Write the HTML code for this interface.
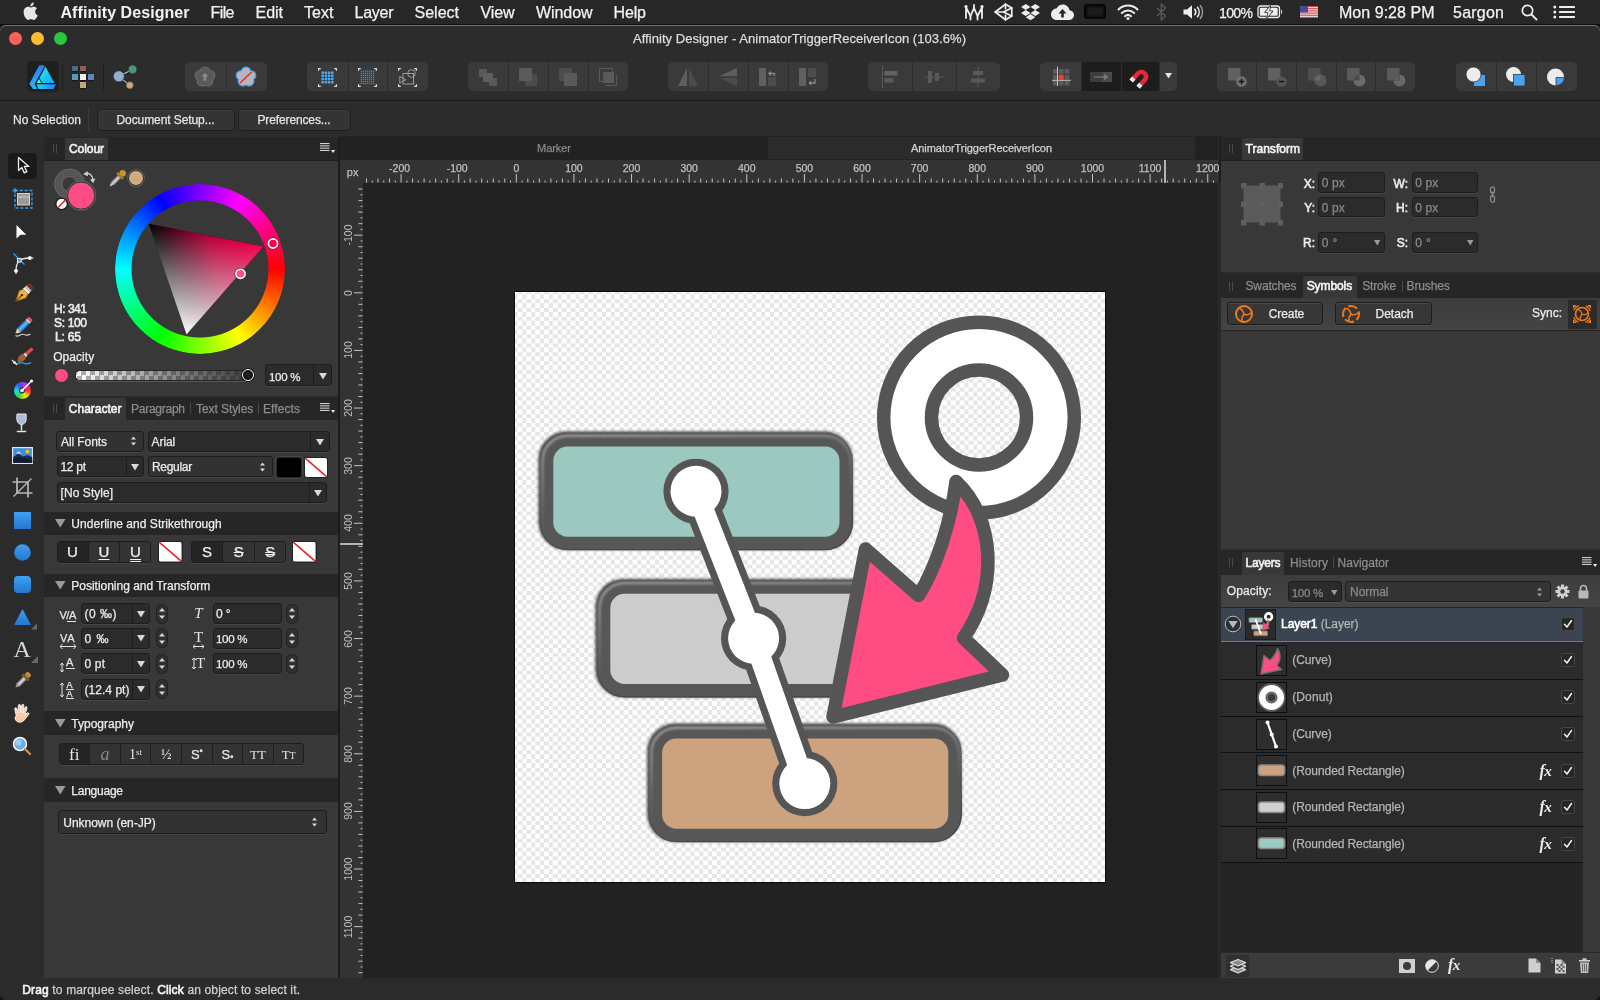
<!DOCTYPE html>
<html lang="en"><head><meta charset="utf-8"><title>Affinity Designer</title>
<style>
*{box-sizing:border-box;margin:0;padding:0}
html,body{width:1600px;height:1000px;overflow:hidden;background:#151515}
body{position:relative;font-family:"Liberation Sans", sans-serif;font-size:12px;color:#ddd;-webkit-font-smoothing:antialiased}
.b{position:absolute;display:block}
.t{position:absolute;white-space:nowrap;overflow:visible}
#root{position:absolute;left:0;top:0;width:1600px;height:1000px;will-change:transform;transform:translateZ(0)}
</style></head>
<body>
<div id="root">
<div class="b" style="left:0px;top:0px;width:1600px;height:24px;background:#272727;"></div>
<div class="b" style="left:0px;top:24px;width:1600px;height:1px;background:#0c0c0c;"></div>
<svg class="b" style="left:22px;top:2px;" width="17" height="19" viewBox="1 0 15 18"><path fill="#e6e6e6" d="M12.9 9.1c0-2 1.6-2.9 1.7-3-0.9-1.4-2.4-1.5-2.9-1.6-1.2-0.1-2.4 0.7-3 0.7-0.6 0-1.6-0.7-2.6-0.7C4.7 4.6 3.4 5.4 2.700 6.600c-1.500 2.500-0.400 6.300 1 8.400 0.700 1 1.500 2.100 2.600 2.100 1 0 1.400-0.700 2.700-0.700 1.300 0 1.600 0.700 2.700 0.600 1.100 0 1.800-1 2.500-2 0.800-1.200 1.100-2.300 1.100-2.300-0.000-0.000-2.400-0.900-2.400-3.600zM10.800 3.100c0.600-0.700 0.900-1.600 0.800-2.600-0.800 0-1.800 0.500-2.400 1.200-0.500 0.600-1 1.600-0.900 2.500 0.900 0.100 1.900-0.400 2.500-1.100z"/></svg>
<div id="m_app" class="t" style="left:60.5px;top:2.00px;height:22px;line-height:22px;font-size:16px;color:#f2f2f2;font-weight:700;letter-spacing:0.062px;">Affinity Designer</div>
<div id="m_File" class="t" style="left:210.5px;top:2.00px;height:22px;line-height:22px;font-size:16px;color:#f2f2f2;font-weight:400;letter-spacing:-0.594px;-webkit-text-stroke:0.25px currentColor;">File</div>
<div id="m_Edit" class="t" style="left:255.5px;top:2.00px;height:22px;line-height:22px;font-size:16px;color:#f2f2f2;font-weight:400;letter-spacing:-0.026px;-webkit-text-stroke:0.25px currentColor;">Edit</div>
<div id="m_Text" class="t" style="left:304px;top:2.00px;height:22px;line-height:22px;font-size:16px;color:#f2f2f2;font-weight:400;letter-spacing:0.052px;-webkit-text-stroke:0.25px currentColor;">Text</div>
<div id="m_Layer" class="t" style="left:354.5px;top:2.00px;height:22px;line-height:22px;font-size:16px;color:#f2f2f2;font-weight:400;letter-spacing:-0.258px;-webkit-text-stroke:0.25px currentColor;">Layer</div>
<div id="m_Select" class="t" style="left:414.5px;top:2.00px;height:22px;line-height:22px;font-size:16px;color:#f2f2f2;font-weight:400;letter-spacing:0.006px;-webkit-text-stroke:0.25px currentColor;">Select</div>
<div id="m_View" class="t" style="left:480.5px;top:2.00px;height:22px;line-height:22px;font-size:16px;color:#f2f2f2;font-weight:400;letter-spacing:-0.130px;-webkit-text-stroke:0.25px currentColor;">View</div>
<div id="m_Window" class="t" style="left:536px;top:2.00px;height:22px;line-height:22px;font-size:16px;color:#f2f2f2;font-weight:400;letter-spacing:-0.081px;-webkit-text-stroke:0.25px currentColor;">Window</div>
<div id="m_Help" class="t" style="left:613.5px;top:2.00px;height:22px;line-height:22px;font-size:16px;color:#f2f2f2;font-weight:400;letter-spacing:-0.135px;-webkit-text-stroke:0.25px currentColor;">Help</div>
<svg class="b" style="left:963px;top:3px;" width="22" height="18" viewBox="0 0 22 18"><g fill="none" stroke="#ededed" stroke-width="1.8" stroke-linecap="round" stroke-linejoin="round"><path d="M3 15V4.500L7.500 13 11 5l3.500 8L19 4.500V15"/><path d="M7.500 13v3.500M14.500 13v3.500M11 5V2"/></g><circle cx="3" cy="3.500" r="1.600" fill="#ededed"/><circle cx="19" cy="3.500" r="1.600" fill="#ededed"/></svg>
<svg class="b" style="left:994px;top:3px;" width="19" height="18" viewBox="0 0 19 18"><g fill="none" stroke="#ededed" stroke-width="1.700" stroke-linejoin="round" stroke-linecap="round"><path d="M11.500 1.200L17.800 5v8L11.500 16.800"/><path d="M17.800 5L9.500 9 17.800 13"/><path d="M9.500 9H1.200"/><path d="M11.500 1.200L1.200 9 11.500 16.800"/><path d="M11.500 1.200v4.500M11.500 16.800v-4.500"/></g></svg>
<svg class="b" style="left:1021px;top:3px;" width="19" height="18" viewBox="0 0.500 20 18"><g fill="#ededed"><path d="M5 1l5 3.200-5 3.200-5-3.200zM15 1l5 3.200-5 3.200-5-3.200zM0 10.600l5-3.200 5 3.200-5 3.200zM15 7.400l5 3.200-5 3.200-5-3.200zM5 14.900l5-3.200 5 3.200-5 3.200z"/></g></svg>
<svg class="b" style="left:1051px;top:4px;" width="23" height="16" viewBox="0 0 23 16"><path fill="#ededed" d="M18.500 6.300C18 3 15.200 0.500 11.800 0.500 9.100 0.500 6.800 2 5.700 4.300 2.500 4.700 0 7.300 0 10.500c0 3 2.500 5.500 5.500 5.500h12.500c2.800 0 5-2.200 5-5 0-2.600-2-4.500-4.500-4.700z"/><path fill="#272727" d="M11.500 5l4 4.500h-2.700v4h-2.600v-4H7.500z"/></svg>
<svg class="b" style="left:1084px;top:4px;" width="22" height="16" viewBox="0 0 22 16"><rect x="0.800" y="0.800" width="20.400" height="13.400" rx="2.500" fill="#101010" stroke="#050505" stroke-width="1.600"/><rect x="3.500" y="3.500" width="15" height="8" rx="1" fill="#1b1b1b"/></svg>
<svg class="b" style="left:1117px;top:4px;" width="22" height="16" viewBox="0 0 22 16"><g fill="none" stroke="#ededed" stroke-width="2" stroke-linecap="round"><path d="M1.500 5.500C7 0.300 15 0.300 20.500 5.500"/><path d="M4.800 9C8.500 5.600 13.500 5.600 17.200 9"/><path d="M8 12.200c1.800-1.600 4.200-1.600 6 0"/></g><circle cx="11" cy="14.500" r="1.500" fill="#ededed"/></svg>
<svg class="b" style="left:1156px;top:3px;" width="11" height="18" viewBox="0 0 11 18"><path fill="none" stroke="#5a5a5a" stroke-width="1.400" stroke-linejoin="round" d="M1 5l8.500 8L5.300 17V1l4.200 4L1 13"/></svg>
<svg class="b" style="left:1183px;top:4px;" width="21" height="16" viewBox="0 0 21 16"><path fill="#ededed" d="M0.500 5.500h3.500L9 1.200v13.600L4 10.500H0.500z"/><g fill="none" stroke="#ededed" stroke-width="1.500" stroke-linecap="round"><path d="M11.800 5.200c1.200 1.600 1.200 4 0 5.600"/><path d="M14.500 3.200c2.200 2.800 2.200 6.800 0 9.600"/></g><path fill="none" stroke="#9a9a9a" stroke-width="1.400" stroke-linecap="round" d="M17.300 1.500c3 3.800 3 9.200 0 13"/></svg>
<div id="m_pct" class="t" style="left:1219px;top:2.80px;height:20px;line-height:20px;font-size:14px;color:#f2f2f2;font-weight:400;letter-spacing:-0.604px;-webkit-text-stroke:0.25px currentColor;">100%</div>
<svg class="b" style="left:1257px;top:5px;" width="27" height="14" viewBox="0 0 27 14"><rect x="1" y="1" width="21.500" height="11.500" rx="2.500" fill="none" stroke="#ededed" stroke-width="1.300"/><rect x="2.800" y="2.800" width="17.900" height="7.900" rx="1" fill="#ededed"/><path d="M24.200 4.500c1.300 0.300 1.300 4.200 0 4.500z" fill="#ededed"/><path fill="#272727" stroke="#272727" stroke-width="1.500" stroke-linejoin="round" d="M13.200 1.200l-5 6h3.200l-1.200 5.200 5.200-6.200h-3.200z"/><path fill="#ededed" d="M13.200 1.200l-5 6h3.200l-1.200 5.200 5.200-6.200h-3.200z"/></svg>
<svg class="b" style="left:1300px;top:6px;border-radius:1.500px" width="18" height="12" viewBox="0 0 18 12"><rect width="18" height="12" fill="#f4f4f4"/><rect y="0.00" width="18" height="0.950" fill="#d33a45"/><rect y="1.85" width="18" height="0.950" fill="#d33a45"/><rect y="3.70" width="18" height="0.950" fill="#d33a45"/><rect y="5.55" width="18" height="0.950" fill="#d33a45"/><rect y="7.40" width="18" height="0.950" fill="#d33a45"/><rect y="9.25" width="18" height="0.950" fill="#d33a45"/><rect y="11.10" width="18" height="0.950" fill="#d33a45"/><rect width="8" height="6.400" fill="#3c4f9c"/></svg>
<div id="m_time" class="t" style="left:1339px;top:2.00px;height:22px;line-height:22px;font-size:16px;color:#f2f2f2;font-weight:400;letter-spacing:0.034px;-webkit-text-stroke:0.25px currentColor;">Mon 9:28 PM</div>
<div id="m_user" class="t" style="left:1453px;top:2.00px;height:22px;line-height:22px;font-size:16px;color:#f2f2f2;font-weight:400;letter-spacing:0.234px;-webkit-text-stroke:0.25px currentColor;">5argon</div>
<svg class="b" style="left:1521px;top:4px;" width="17" height="17" viewBox="0 0 17 17"><circle cx="6.500" cy="6.500" r="5.200" fill="none" stroke="#ededed" stroke-width="1.700"/><path d="M10.500 10.500l5 5" stroke="#ededed" stroke-width="1.900" stroke-linecap="round"/></svg>
<svg class="b" style="left:1553px;top:5px;" width="23" height="14" viewBox="0 0 23 14"><g fill="#ededed"><circle cx="1.800" cy="2" r="1.500"/><circle cx="1.800" cy="7" r="1.500"/><circle cx="1.800" cy="12" r="1.500"/><rect x="6" y="0.900" width="16" height="2.200" rx="0.500"/><rect x="6" y="5.900" width="16" height="2.200" rx="0.500"/><rect x="6" y="10.900" width="16" height="2.200" rx="0.500"/></g></svg>
<div class="b" style="left:0px;top:25px;width:1600px;height:975px;background:#2c2c2c;border-radius:6px 6px 7px 7px;box-shadow:inset 0 1px 0 #757575;"></div>
<div class="b" style="left:9.0px;top:32px;width:13px;height:13px;background:#fe5f57;border-radius:50%;"></div>
<div class="b" style="left:31.0px;top:32px;width:13px;height:13px;background:#febc2e;border-radius:50%;"></div>
<div class="b" style="left:53.5px;top:32px;width:13px;height:13px;background:#28c840;border-radius:50%;"></div>
<div id="title" class="t" style="left:799.5px;transform:translateX(-50%);top:29.70px;height:18px;line-height:18px;font-size:13px;color:#dcdcdc;font-weight:400;letter-spacing:0.051px;-webkit-text-stroke:0.25px currentColor;">Affinity Designer - AnimatorTriggerReceiverIcon (103.6%)</div>
<div class="b" style="left:27px;top:61px;width:32px;height:31px;background:#1f1f1f;border-radius:5px;box-shadow:0 0 0 1px #222 inset;"></div>
<svg class="b" style="left:27px;top:61px;" width="32" height="31" viewBox="27 61 32 31"><defs><linearGradient id="dg1" x1="0" y1="0" x2="1" y2="1"><stop offset="0" stop-color="#30f0e8"/><stop offset="1" stop-color="#12a8f8"/></linearGradient><linearGradient id="dg2" x1="0" y1="0" x2="0" y2="1"><stop offset="0" stop-color="#2a7cf8"/><stop offset="1" stop-color="#22b8f8"/></linearGradient><linearGradient id="dg3" x1="0" y1="0" x2="1" y2="0"><stop offset="0" stop-color="#22d8f5"/><stop offset="1" stop-color="#2a78f5"/></linearGradient></defs><path d="M45.200 66.600L54.600 82.900H36.300L44 69z" fill="url(#dg1)"/><path d="M39.200 65.300h4.800l0.600 1L34.700 84l2.800 5H33l-3.700-5z" fill="url(#dg2)"/><path d="M36.200 84.200h19.600l-2.100 4.800H38.300z" fill="url(#dg3)"/><path d="M38.800 78.500l2.800 4.600h-5.400z" fill="#35ffc0"/><path d="M44.300 68.500L35.500 84l2.500 4.300" stroke="#1f1f1f" stroke-width="0.900" fill="none"/><path d="M38.400 77.200l3.700 6" stroke="#1f1f1f" stroke-width="0.900" fill="none"/></svg>
<div class="b" style="left:62px;top:64px;width:1px;height:25.5px;background:#1d1d1d;"></div>
<div class="b" style="left:103.3px;top:64px;width:1px;height:25.5px;background:#1d1d1d;"></div>
<div class="b" style="left:72px;top:65.6px;width:6px;height:5.8px;background:#4a6d80;box-shadow:0 0.500px 1.500px rgba(0,0,0,.9);"></div>
<div class="b" style="left:80.3px;top:65.6px;width:6px;height:5.8px;background:#8a6258;box-shadow:0 0.500px 1.500px rgba(0,0,0,.9);"></div>
<div class="b" style="left:72px;top:73.9px;width:6px;height:5.8px;background:#5a9ab0;box-shadow:0 0.500px 1.500px rgba(0,0,0,.9);"></div>
<div class="b" style="left:80.3px;top:73.9px;width:6px;height:5.8px;background:#f0f0f0;box-shadow:0 0.500px 1.500px rgba(0,0,0,.9);"></div>
<div class="b" style="left:88.3px;top:73.9px;width:6px;height:5.8px;background:#5a88b8;box-shadow:0 0.500px 1.500px rgba(0,0,0,.9);"></div>
<div class="b" style="left:80.3px;top:81.9px;width:6px;height:5.8px;background:#c9a57c;box-shadow:0 0.500px 1.500px rgba(0,0,0,.9);"></div>
<svg class="b" style="left:111px;top:63px;" width="28" height="28" viewBox="0 0 28 28"><g stroke="#dcdcdc" stroke-width="1"><path d="M7.800 13.300L21.600 6.400M7.800 13.300L18.800 22.300"/></g><circle cx="7.800" cy="13.300" r="5.500" fill="#8faecb" stroke="#222" stroke-width="0.500"/><circle cx="21.600" cy="6.400" r="4.300" fill="#4f9585" stroke="#222" stroke-width="0.500"/><circle cx="18.800" cy="22.300" r="3.700" fill="#c8a77c" stroke="#222" stroke-width="0.500"/></svg>
<div class="b" style="left:184.5px;top:62px;width:82.5px;height:29px;background:#3a3a3a;border-radius:5px;overflow:hidden;"></div>
<div class="b" style="left:225.5px;top:62px;width:1px;height:29px;background:#2c2c2c;"></div>
<svg class="b" style="left:192.625px;top:65.0px;" width="24" height="24" viewBox="0 0 24 24"><g transform="translate(12,12)"><g fill="#6c6c6c" stroke="#6c6c6c" stroke-width="2"><circle cx="0.00" cy="-5.20" r="4.400"/><circle cx="4.95" cy="-1.61" r="4.400"/><circle cx="3.06" cy="4.21" r="4.400"/><circle cx="-3.06" cy="4.21" r="4.400"/><circle cx="-4.95" cy="-1.61" r="4.400"/><circle r="5"/></g><g fill="#5a5a5a"><circle cx="0.00" cy="-5.20" r="4.400"/><circle cx="4.95" cy="-1.61" r="4.400"/><circle cx="3.06" cy="4.21" r="4.400"/><circle cx="-3.06" cy="4.21" r="4.400"/><circle cx="-4.95" cy="-1.61" r="4.400"/><circle r="5"/></g><path d="M0 -4.200l3.300 3.800h-2v4.200h-2.600v-4.200h-2z" fill="#8c8c8c"/></g></svg>
<svg class="b" style="left:233.875px;top:65.0px;" width="24" height="24" viewBox="0 0 24 24"><g transform="translate(12,12)"><g fill="#2f8ff0" stroke="#2f8ff0" stroke-width="2.2"><circle cx="0.00" cy="-5.20" r="4.400"/><circle cx="4.95" cy="-1.61" r="4.400"/><circle cx="3.06" cy="4.21" r="4.400"/><circle cx="-3.06" cy="4.21" r="4.400"/><circle cx="-4.95" cy="-1.61" r="4.400"/><circle r="5"/></g><g fill="#b4b6b9"><circle cx="0.00" cy="-5.20" r="4.400"/><circle cx="4.95" cy="-1.61" r="4.400"/><circle cx="3.06" cy="4.21" r="4.400"/><circle cx="-3.06" cy="4.21" r="4.400"/><circle cx="-4.95" cy="-1.61" r="4.400"/><circle r="5"/></g><path d="M-6 6L6 -5.200" stroke="#f0252b" stroke-width="1.400"/></g></svg>
<div class="b" style="left:306.5px;top:62px;width:121.5px;height:29px;background:#3a3a3a;border-radius:5px;overflow:hidden;"></div>
<div class="b" style="left:347.5px;top:62px;width:1px;height:29px;background:#2c2c2c;"></div>
<div class="b" style="left:386.5px;top:62px;width:1px;height:29px;background:#2c2c2c;"></div>
<svg class="b" style="left:318.0px;top:67.5px;" width="19" height="19" viewBox="0 0 19 19"><g fill="none" stroke="#dcdcdc" stroke-width="1.200"><path d="M0.600 2.800V0.600h2.200M16.200 0.600h2.200v2.200M18.400 16.200v2.200h-2.200M2.800 18.400H0.600v-2.200"/></g><rect x="3.4" y="3.4" width="2.500" height="2.500" rx="0.400" fill="#4aa8f5"/><rect x="3.4" y="6.6" width="2.500" height="2.500" rx="0.400" fill="#4aa8f5"/><rect x="3.4" y="9.8" width="2.500" height="2.500" rx="0.400" fill="#4aa8f5"/><rect x="3.4" y="13.0" width="2.500" height="2.500" rx="0.400" fill="#4aa8f5"/><rect x="6.6" y="3.4" width="2.500" height="2.500" rx="0.400" fill="#4aa8f5"/><rect x="6.6" y="6.6" width="2.500" height="2.500" rx="0.400" fill="#4aa8f5"/><rect x="6.6" y="9.8" width="2.500" height="2.500" rx="0.400" fill="#4aa8f5"/><rect x="6.6" y="13.0" width="2.500" height="2.500" rx="0.400" fill="#4aa8f5"/><rect x="9.8" y="3.4" width="2.500" height="2.500" rx="0.400" fill="#4aa8f5"/><rect x="9.8" y="6.6" width="2.500" height="2.500" rx="0.400" fill="#4aa8f5"/><rect x="9.8" y="9.8" width="2.500" height="2.500" rx="0.400" fill="#4aa8f5"/><rect x="9.8" y="13.0" width="2.500" height="2.500" rx="0.400" fill="#4aa8f5"/><rect x="13.0" y="3.4" width="2.500" height="2.500" rx="0.400" fill="#4aa8f5"/><rect x="13.0" y="6.6" width="2.500" height="2.500" rx="0.400" fill="#4aa8f5"/><rect x="13.0" y="9.8" width="2.500" height="2.500" rx="0.400" fill="#4aa8f5"/><rect x="13.0" y="13.0" width="2.500" height="2.500" rx="0.400" fill="#4aa8f5"/></svg>
<svg class="b" style="left:358.35px;top:67.5px;" width="19" height="19" viewBox="0 0 19 19"><g fill="none" stroke="#dcdcdc" stroke-width="1.200"><path d="M0.600 2.800V0.600h2.200M16.200 0.600h2.200v2.200M18.400 16.200v2.200h-2.200M2.800 18.400H0.600v-2.200"/></g><rect x="2.60" y="2.60" width="1.300" height="1.300" fill="#3b86d2"/><rect x="2.60" y="4.65" width="1.300" height="1.300" fill="#3b86d2"/><rect x="2.60" y="6.70" width="1.300" height="1.300" fill="#3b86d2"/><rect x="2.60" y="8.75" width="1.300" height="1.300" fill="#3b86d2"/><rect x="2.60" y="10.80" width="1.300" height="1.300" fill="#3b86d2"/><rect x="2.60" y="12.85" width="1.300" height="1.300" fill="#3b86d2"/><rect x="2.60" y="14.90" width="1.300" height="1.300" fill="#3b86d2"/><rect x="4.65" y="2.60" width="1.300" height="1.300" fill="#3b86d2"/><rect x="4.65" y="4.65" width="1.300" height="1.300" fill="#3b86d2"/><rect x="4.65" y="6.70" width="1.300" height="1.300" fill="#3b86d2"/><rect x="4.65" y="8.75" width="1.300" height="1.300" fill="#3b86d2"/><rect x="4.65" y="10.80" width="1.300" height="1.300" fill="#3b86d2"/><rect x="4.65" y="12.85" width="1.300" height="1.300" fill="#3b86d2"/><rect x="4.65" y="14.90" width="1.300" height="1.300" fill="#3b86d2"/><rect x="6.70" y="2.60" width="1.300" height="1.300" fill="#3b86d2"/><rect x="6.70" y="4.65" width="1.300" height="1.300" fill="#3b86d2"/><rect x="6.70" y="6.70" width="1.300" height="1.300" fill="#3b86d2"/><rect x="6.70" y="8.75" width="1.300" height="1.300" fill="#3b86d2"/><rect x="6.70" y="10.80" width="1.300" height="1.300" fill="#3b86d2"/><rect x="6.70" y="12.85" width="1.300" height="1.300" fill="#3b86d2"/><rect x="6.70" y="14.90" width="1.300" height="1.300" fill="#3b86d2"/><rect x="8.75" y="2.60" width="1.300" height="1.300" fill="#3b86d2"/><rect x="8.75" y="4.65" width="1.300" height="1.300" fill="#3b86d2"/><rect x="8.75" y="6.70" width="1.300" height="1.300" fill="#3b86d2"/><rect x="8.75" y="8.75" width="1.300" height="1.300" fill="#3b86d2"/><rect x="8.75" y="10.80" width="1.300" height="1.300" fill="#3b86d2"/><rect x="8.75" y="12.85" width="1.300" height="1.300" fill="#3b86d2"/><rect x="8.75" y="14.90" width="1.300" height="1.300" fill="#3b86d2"/><rect x="10.80" y="2.60" width="1.300" height="1.300" fill="#3b86d2"/><rect x="10.80" y="4.65" width="1.300" height="1.300" fill="#3b86d2"/><rect x="10.80" y="6.70" width="1.300" height="1.300" fill="#3b86d2"/><rect x="10.80" y="8.75" width="1.300" height="1.300" fill="#3b86d2"/><rect x="10.80" y="10.80" width="1.300" height="1.300" fill="#3b86d2"/><rect x="10.80" y="12.85" width="1.300" height="1.300" fill="#3b86d2"/><rect x="10.80" y="14.90" width="1.300" height="1.300" fill="#3b86d2"/><rect x="12.85" y="2.60" width="1.300" height="1.300" fill="#3b86d2"/><rect x="12.85" y="4.65" width="1.300" height="1.300" fill="#3b86d2"/><rect x="12.85" y="6.70" width="1.300" height="1.300" fill="#3b86d2"/><rect x="12.85" y="8.75" width="1.300" height="1.300" fill="#3b86d2"/><rect x="12.85" y="10.80" width="1.300" height="1.300" fill="#3b86d2"/><rect x="12.85" y="12.85" width="1.300" height="1.300" fill="#3b86d2"/><rect x="12.85" y="14.90" width="1.300" height="1.300" fill="#3b86d2"/><rect x="14.90" y="2.60" width="1.300" height="1.300" fill="#3b86d2"/><rect x="14.90" y="4.65" width="1.300" height="1.300" fill="#3b86d2"/><rect x="14.90" y="6.70" width="1.300" height="1.300" fill="#3b86d2"/><rect x="14.90" y="8.75" width="1.300" height="1.300" fill="#3b86d2"/><rect x="14.90" y="10.80" width="1.300" height="1.300" fill="#3b86d2"/><rect x="14.90" y="12.85" width="1.300" height="1.300" fill="#3b86d2"/><rect x="14.90" y="14.90" width="1.300" height="1.300" fill="#3b86d2"/></svg>
<svg class="b" style="left:398.1px;top:67.5px;" width="19" height="19" viewBox="0 0 19 19"><g fill="none" stroke="#dcdcdc" stroke-width="1.200"><path d="M0.600 2.800V0.600h2.200M16.200 0.600h2.200v2.200M18.400 16.200v2.200h-2.200M2.800 18.400H0.600v-2.200"/></g><g fill="none" stroke="#9c9c9c" stroke-width="1"><rect x="5" y="5.500" width="10.500" height="10.500"/><circle cx="13.500" cy="5.500" r="3.800"/><path d="M1.800 8.500v6.500l6-3.200z"/></g></svg>
<div class="b" style="left:468px;top:62px;width:159.5px;height:29px;background:#3a3a3a;border-radius:5px;overflow:hidden;"></div>
<div class="b" style="left:507.5px;top:62px;width:1px;height:29px;background:#2c2c2c;"></div>
<div class="b" style="left:547.5px;top:62px;width:1px;height:29px;background:#2c2c2c;"></div>
<div class="b" style="left:587.5px;top:62px;width:1px;height:29px;background:#2c2c2c;"></div>
<svg class="b" style="left:476.9375px;top:65.5px;" width="22" height="22" viewBox="0 0 22 22"><rect x="2" y="3" width="8" height="8" fill="#585858"/><rect x="12" y="12" width="8" height="8" fill="#585858"/><rect x="6" y="7" width="10" height="9" fill="#5e5e5e"/></svg>
<svg class="b" style="left:516.8125px;top:65.5px;" width="22" height="22" viewBox="0 0 22 22"><rect x="8" y="8" width="12" height="12" fill="#4c4c4c"/><rect x="2" y="2" width="13" height="13" fill="#5a5a5a"/></svg>
<svg class="b" style="left:556.6875px;top:65.5px;" width="22" height="22" viewBox="0 0 22 22"><rect x="2" y="2" width="13" height="13" fill="#4c4c4c"/><rect x="7" y="7" width="13" height="13" fill="#5a5a5a"/></svg>
<svg class="b" style="left:596.5625px;top:65.5px;" width="22" height="22" viewBox="0 0 22 22"><rect x="2.500" y="2.500" width="13" height="13" fill="none" stroke="#585858" stroke-width="1.200"/><rect x="6" y="6" width="11" height="11" fill="#5a5a5a"/><path d="M19.500 9v10.500H9" fill="none" stroke="#585858" stroke-width="1.200"/></svg>
<div class="b" style="left:667.5px;top:62px;width:160.5px;height:29px;background:#3a3a3a;border-radius:5px;overflow:hidden;"></div>
<div class="b" style="left:707.5px;top:62px;width:1px;height:29px;background:#2c2c2c;"></div>
<div class="b" style="left:747.5px;top:62px;width:1px;height:29px;background:#2c2c2c;"></div>
<div class="b" style="left:787.5px;top:62px;width:1px;height:29px;background:#2c2c2c;"></div>
<svg class="b" style="left:675.5625px;top:65.5px;" width="24" height="22" viewBox="0 0 24 22"><path d="M11 2v18H2z" fill="#5e5e5e"/><path d="M13 2v18h9z" fill="#4c4c4c"/></svg>
<svg class="b" style="left:715.6875px;top:65.5px;" width="24" height="22" viewBox="0 0 24 22"><path d="M21 10.300H3L21 2z" fill="#5e5e5e"/><path d="M21 12H3l18 8z" fill="#4c4c4c"/></svg>
<svg class="b" style="left:756.8125px;top:65.5px;" width="22" height="22" viewBox="0 0 22 22"><rect x="2" y="2" width="7" height="18" fill="#606060"/><rect x="11" y="11" width="8" height="9" fill="#4c4c4c"/><path d="M12 7.500h5.500V10" fill="none" stroke="#8a8a8a" stroke-width="1.300"/><path d="M13.800 4.800L11 7.500l2.800 2.700z" fill="#8a8a8a"/></svg>
<svg class="b" style="left:796.9375px;top:65.5px;" width="22" height="22" viewBox="0 0 22 22"><rect x="2" y="2" width="7" height="18" fill="#606060"/><rect x="11" y="2" width="8" height="9" fill="#4c4c4c"/><path d="M18 13v4h-5.500" fill="none" stroke="#8a8a8a" stroke-width="1.300"/><path d="M14.300 14.300L11.500 17l2.800 2.700z" fill="#8a8a8a"/></svg>
<div class="b" style="left:867.5px;top:62px;width:132.5px;height:29px;background:#3a3a3a;border-radius:5px;overflow:hidden;"></div>
<div class="b" style="left:911.5px;top:62px;width:1px;height:29px;background:#2c2c2c;"></div>
<div class="b" style="left:955.5px;top:62px;width:1px;height:29px;background:#2c2c2c;"></div>
<svg class="b" style="left:878.5833333333333px;top:64.5px;" width="22" height="24" viewBox="0 0 22 24"><rect x="3" y="1" width="1" height="22" fill="#585858"/><rect x="5.500" y="6" width="13" height="4.500" fill="#636363"/><rect x="5.500" y="13" width="9" height="4.500" fill="#585858"/></svg>
<svg class="b" style="left:921.75px;top:64.5px;" width="24" height="24" viewBox="0 0 24 24"><rect x="2" y="11.500" width="20" height="1" fill="#585858"/><rect x="6" y="6" width="4" height="12" fill="#5a5a5a"/><rect x="13" y="8" width="4" height="8" fill="#585858"/></svg>
<svg class="b" style="left:965.9166666666665px;top:64.5px;" width="24" height="24" viewBox="0 0 24 24"><rect x="11.500" y="2" width="1" height="20" fill="#585858"/><rect x="7" y="6" width="10" height="4" fill="#5a5a5a"/><rect x="5" y="13.500" width="14" height="4" fill="#585858"/></svg>
<div class="b" style="left:1040px;top:62px;width:136.5px;height:29px;background:#3a3a3a;border-radius:5px;overflow:hidden;"></div>
<div class="b" style="left:1080.5px;top:62px;width:1px;height:29px;background:#2c2c2c;"></div>
<div class="b" style="left:1119.5px;top:62px;width:1px;height:29px;background:#2c2c2c;"></div>
<div class="b" style="left:1158.5px;top:62px;width:1px;height:29px;background:#2c2c2c;"></div>
<div class="b" style="left:1081.5px;top:62px;width:39px;height:29px;background:#1d1d1d;"></div>
<div class="b" style="left:1121px;top:62px;width:37.5px;height:29px;background:#1d1d1d;"></div>
<div class="b" style="left:1120.5px;top:62px;width:1px;height:29px;background:#2c2c2c;"></div>
<svg class="b" style="left:1051px;top:65.8px;" width="22" height="22" viewBox="0 0 22 22"><g fill="#5c5c5c"><rect x="2.0" y="3.0" width="4.700" height="4.700"/><rect x="2.0" y="8.8" width="4.700" height="4.700"/><rect x="2.0" y="14.6" width="4.700" height="4.700"/><rect x="7.8" y="3.0" width="4.700" height="4.700"/><rect x="7.8" y="8.8" width="4.700" height="4.700"/><rect x="7.8" y="14.6" width="4.700" height="4.700"/><rect x="13.6" y="3.0" width="4.700" height="4.700"/><rect x="13.6" y="8.8" width="4.700" height="4.700"/><rect x="13.6" y="14.6" width="4.700" height="4.700"/></g><rect x="7.800" y="8.800" width="4.700" height="4.700" fill="#ff3b30"/><path d="M6.500 0.500v19.500M1 14.300h19" stroke="#cfcfcf" stroke-width="0.900"/></svg>
<svg class="b" style="left:1090.0px;top:70.5px;" width="22" height="12" viewBox="0 0 22 12"><rect x="0" y="1" width="12" height="10" fill="#3c3c3c"/><rect x="12" y="1" width="10" height="10" fill="#4a4a4a"/><path d="M4 6h11" stroke="#777" stroke-width="1.200"/><path d="M14 2.800L18.500 6 14 9.200z" fill="#777"/></svg>
<svg class="b" style="left:1129.0px;top:65.0px;" width="24" height="24" viewBox="0 0 24 24"><g transform="rotate(222 12 12)"><path d="M5 3.500v9a7 7 0 0 0 14 0v-9h-4.600v9a2.400 2.400 0 0 1-4.800 0v-9z" fill="#e8283a"/><rect x="5" y="2.500" width="4.600" height="4" fill="#ececec"/><rect x="14.400" y="2.500" width="4.600" height="4" fill="#ececec"/></g></svg>
<svg class="b" style="left:1164.8px;top:72.85px;" width="7" height="5.5" viewBox="0 0 7 5.5"><path d="M0 0h7L3.500 5.500z" fill="#e6e6e6"/></svg>
<div class="b" style="left:1216.5px;top:62px;width:198.5px;height:29px;background:#3a3a3a;border-radius:5px;overflow:hidden;"></div>
<div class="b" style="left:1255.5px;top:62px;width:1px;height:29px;background:#2c2c2c;"></div>
<div class="b" style="left:1295.5px;top:62px;width:1px;height:29px;background:#2c2c2c;"></div>
<div class="b" style="left:1335.5px;top:62px;width:1px;height:29px;background:#2c2c2c;"></div>
<div class="b" style="left:1374.5px;top:62px;width:1px;height:29px;background:#2c2c2c;"></div>
<svg class="b" style="left:1225.35px;top:65.0px;" width="24" height="24" viewBox="0 0 24 24"><rect x="3" y="3" width="12.500" height="12.500" fill="#606060"/><circle cx="16.500" cy="16.500" r="5.300" fill="#707070"/><path d="M16.500 13.800v5.400M13.800 16.500h5.400" stroke="#111" stroke-width="1.300"/></svg>
<svg class="b" style="left:1265.0500000000002px;top:65.0px;" width="24" height="24" viewBox="0 0 24 24"><rect x="3" y="3" width="12.500" height="12.500" fill="#606060"/><circle cx="16.500" cy="16.500" r="5.300" fill="#545454"/><path d="M13.800 16.500h5.400" stroke="#161616" stroke-width="1.300"/></svg>
<svg class="b" style="left:1304.75px;top:65.0px;" width="24" height="24" viewBox="0 0 24 24"><rect x="3" y="3" width="12.500" height="12.500" fill="#4e4e4e"/><circle cx="15.500" cy="15.500" r="6" fill="#565656"/><path d="M9.500 15.500A6 6 0 0 1 15.500 9.500V15.500z" fill="#666"/></svg>
<svg class="b" style="left:1344.4500000000003px;top:65.0px;" width="24" height="24" viewBox="0 0 24 24"><rect x="3" y="3" width="12.500" height="12.500" fill="#5a5a5a"/><circle cx="15.500" cy="15.500" r="6" fill="#6a6a6a"/><path d="M9.500 15.500A6 6 0 0 1 15.500 9.500V15.500z" fill="#4a4a4a"/></svg>
<svg class="b" style="left:1384.15px;top:65.0px;" width="24" height="24" viewBox="0 0 24 24"><rect x="3" y="3" width="12.500" height="12.500" fill="#5a5a5a"/><circle cx="15.500" cy="15.500" r="6" fill="#686868"/><path d="M9.500 15.500A6 6 0 0 1 15.500 9.500V15.500z" fill="#606060" stroke="#4a4a4a" stroke-width="0.700"/></svg>
<div class="b" style="left:1455.5px;top:62px;width:121.0px;height:29px;background:#3a3a3a;border-radius:5px;overflow:hidden;"></div>
<div class="b" style="left:1495.5px;top:62px;width:1px;height:29px;background:#2c2c2c;"></div>
<div class="b" style="left:1535.5px;top:62px;width:1px;height:29px;background:#2c2c2c;"></div>
<svg class="b" style="left:1463.6666666666665px;top:64.5px;" width="24" height="24" viewBox="0 0 24 24"><rect x="10" y="10" width="11" height="11" fill="#4aa3f0"/><circle cx="9.500" cy="9.500" r="7.500" fill="#ececec" stroke="#3a3a3a" stroke-width="0.800"/></svg>
<svg class="b" style="left:1504.0px;top:64.5px;" width="24" height="24" viewBox="0 0 24 24"><circle cx="9.500" cy="9.500" r="7.500" fill="#ececec"/><rect x="9.500" y="9.500" width="11.500" height="11.500" fill="#4aa3f0" stroke="#3a3a3a" stroke-width="0.800"/></svg>
<svg class="b" style="left:1544.333333333333px;top:64.5px;" width="24" height="24" viewBox="0 0 24 24"><circle cx="11.500" cy="12" r="8.500" fill="#ececec"/><path d="M12 12.500h8.500v0a8.500 8.500 0 0 1-8.500 8z" fill="#4aa3f0" stroke="#3a3a3a" stroke-width="0.800"/></svg>
<div class="b" style="left:0px;top:100px;width:1600px;height:1px;background:#1c1c1c;"></div>
<div id="c_nosel" class="t" style="left:13px;top:111.70px;height:17px;line-height:17px;font-size:12px;color:#e4e4e4;font-weight:400;letter-spacing:-0.004px;-webkit-text-stroke:0.25px currentColor;">No Selection</div>
<div class="b" style="left:88px;top:108px;width:1px;height:23px;background:#3a3a3a;"></div>
<div class="b" style="left:97px;top:108.5px;width:137.5px;height:22px;background:#343434;border-radius:3px;border:1px solid #1f1f1f;box-shadow:inset 0 1px 0 #3d3d3d;"></div>
<div class="b" style="left:238px;top:108.5px;width:113px;height:22px;background:#343434;border-radius:3px;border:1px solid #1f1f1f;box-shadow:inset 0 1px 0 #3d3d3d;"></div>
<div id="c_doc" class="t" style="left:116.5px;top:112.00px;height:17px;line-height:17px;font-size:12px;color:#e4e4e4;font-weight:400;letter-spacing:-0.087px;-webkit-text-stroke:0.25px currentColor;">Document Setup...</div>
<div id="c_pref" class="t" style="left:257.5px;top:112.00px;height:17px;line-height:17px;font-size:12px;color:#e4e4e4;font-weight:400;letter-spacing:-0.131px;-webkit-text-stroke:0.25px currentColor;">Preferences...</div>
<div class="b" style="left:0px;top:137px;width:44px;height:841px;background:#2b2b2b;"></div>
<div class="b" style="left:8px;top:152.5px;width:28.5px;height:26px;background:#1a1a1a;border-radius:4px;"></div>
<svg class="b" style="left:16px;top:156px;" width="16" height="19" viewBox="0 0 16 19"><path d="M2.500 1.500v13l3.300-3 2.400 5.300 2.600-1.200-2.400-5.200h4.400z" fill="#151515" stroke="#f2f2f2" stroke-width="1.300" stroke-linejoin="round"/></svg>
<svg class="b" style="left:12px;top:187px;" width="22" height="23" viewBox="0 0 22 23"><rect x="3" y="3.500" width="17" height="17.500" fill="none" stroke="#3d9bf0" stroke-width="1.400" stroke-dasharray="3 1.800"/><path d="M0.500 3.500h5M3 1v5" stroke="#3d9bf0" stroke-width="1.300"/><rect x="5.500" y="6.500" width="12" height="11.500" fill="#9a9a9a" stroke="#d4d4d4" stroke-width="1"/><rect x="6" y="9.500" width="11" height="1" fill="#cfcfcf"/></svg>
<svg class="b" style="left:15px;top:224px;" width="13" height="16" viewBox="0 0 13 16"><path d="M1.500 1v13.500l3.800-3.800h6z" fill="#fff"/></svg>
<svg class="b" style="left:12px;top:252px;" width="22" height="22" viewBox="0 0 22 22"><path d="M1.500 1.500l11 11" stroke="#3d9bf0" stroke-width="1.200"/><path d="M4 18.500c0-8 3.500-12.500 13.500-12.500" fill="none" stroke="#e8e8e8" stroke-width="1.300"/><rect x="5.300" y="6.300" width="3.800" height="3.800" fill="#3d9bf0" stroke="#fff" stroke-width="0.800"/><circle cx="17.800" cy="6" r="1.900" fill="#fff"/><circle cx="4" cy="18.800" r="1.900" fill="#fff"/><path d="M19 6h2.500M4 19.500v2.500" stroke="#fff" stroke-width="1"/></svg>
<svg class="b" style="left:12px;top:283px;" width="22" height="22" viewBox="0 0 22 22"><g transform="rotate(45 11 11)"><path d="M11 21.500L6 11.500l1.500-4h7l1.500 4z" fill="#f1b33c" stroke="#7a5312" stroke-width="0.800"/><path d="M11 21v-8" stroke="#5a3a08" stroke-width="1"/><circle cx="11" cy="12.500" r="1.300" fill="#3a2606"/><rect x="7.200" y="4.800" width="7.600" height="2.600" fill="#eee"/><rect x="7.500" y="2.300" width="7" height="2.600" fill="#c9c9c9"/><rect x="7.500" y="-1.500" width="7" height="4" rx="1.500" fill="#7a2f22"/></g></svg>
<svg class="b" style="left:11px;top:316px;" width="23" height="22" viewBox="0 0 23 22"><g transform="rotate(45 12 10)"><rect x="9.500" y="-1" width="5.400" height="3" rx="1" fill="#e8525a"/><rect x="9.500" y="2" width="5.400" height="2" fill="#d8d8d8"/><rect x="9.500" y="4" width="5.400" height="12" fill="#2f8de8"/><rect x="11.300" y="4" width="1.800" height="12" fill="#6ab6ff"/><path d="M9.500 16h5.400l-2.700 5z" fill="#f1d2a4"/><path d="M11.400 19.500h1.600l-0.800 1.500z" fill="#333"/></g><path d="M4.500 19.500c3 2.500 5-2.500 8.500-1 2 0.900 3.500 1.500 6.500-0.500" fill="none" stroke="#cfcfcf" stroke-width="1.100"/></svg>
<svg class="b" style="left:11px;top:347px;" width="23" height="23" viewBox="0 0 23 23"><g transform="rotate(48 12 10)"><rect x="10.300" y="-3" width="3.400" height="9" rx="1.500" fill="#e0454d"/><rect x="10" y="5.500" width="4" height="2.500" fill="#cfcfcf"/><path d="M9.500 8h5c1.500 3 1 6-2.500 9.500-3.500-3.500-4-6.500-2.500-9.500z" fill="#a0622d"/></g><path d="M3.500 15.500c3 3.500 6-1.500 9 0.500 2.200 1.500 4 1.500 7.500-0.500" fill="none" stroke="#3d9bf0" stroke-width="1.200"/><path d="M1 13l5 5" stroke="#e8e8e8" stroke-width="1.100"/><circle cx="3.500" cy="15.500" r="1.300" fill="#fff"/></svg>
<div class="b" style="left:13.5px;top:382px;width:17px;height:17px;background:conic-gradient(from 90deg,#ff2a2a,#ffe11a,#35e03a,#1ad7e8,#2a55ff,#e02ae0,#ff2a2a);border-radius:50%;"></div>
<svg class="b" style="left:12px;top:378px;" width="22" height="22" viewBox="0 0 22 22"><circle cx="10" cy="12.500" r="3" fill="#333"/><path d="M10 12.500L19.500 3" stroke="#fff" stroke-width="1.400"/><circle cx="10" cy="12.500" r="1.800" fill="#fff"/><circle cx="19.500" cy="3" r="1.600" fill="#fff"/></svg>
<svg class="b" style="left:15px;top:413px;" width="13" height="20" viewBox="0 0 13 20"><path d="M2 1h9c0.500 5 0.500 10-4.500 10.500C1.500 11 1.500 6 2 1z" fill="#aebbd6" stroke="#e6ebf5" stroke-width="1"/><path d="M6.500 11.500v6" stroke="#dfe5f2" stroke-width="1.500"/><path d="M2.500 18.500h8" stroke="#dfe5f2" stroke-width="1.600" stroke-linecap="round"/></svg>
<svg class="b" style="left:12px;top:447px;" width="21" height="17" viewBox="0 0 21 17"><rect x="0.600" y="0.600" width="19.800" height="15.800" fill="#3d8fe0" stroke="#e6e6e6" stroke-width="1.200"/><path d="M1.200 10l5-3.500 5 3 4-1.500 5 2v5.800h-19z" fill="#1c2c4c"/><path d="M1.200 12l6-2 13 3v2.800h-19z" fill="#101a30"/><circle cx="15.500" cy="4.500" r="2" fill="#f5b83a"/><path d="M4 6.500l2.500-2 3 2z" fill="#e8f0ff"/></svg>
<svg class="b" style="left:12px;top:477px;" width="21" height="21" viewBox="0 0 21 21"><g stroke="#b8b8b8" stroke-width="1.700" fill="none"><path d="M5 0.500v15.500h15.500M0.500 5h15.500v15.500"/><path d="M1.500 19.500l18-18" stroke-width="1.300"/></g></svg>
<svg class="b" style="left:14px;top:512px;" width="17" height="17" viewBox="0 0 17 17"><defs><linearGradient id="bg1" x1="0" y1="0" x2="0" y2="1"><stop offset="0" stop-color="#3f9ff0"/><stop offset="1" stop-color="#2178d0"/></linearGradient></defs><rect width="17" height="17" fill="url(#bg1)"/></svg>
<svg class="b" style="left:14px;top:544px;" width="17" height="17" viewBox="0 0 17 17"><defs><linearGradient id="bg2" x1="0" y1="0" x2="0" y2="1"><stop offset="0" stop-color="#3f9ff0"/><stop offset="1" stop-color="#2178d0"/></linearGradient></defs><circle cx="8.500" cy="8.500" r="8.300" fill="url(#bg2)"/></svg>
<svg class="b" style="left:14px;top:576px;" width="17" height="17" viewBox="0 0 17 17"><defs><linearGradient id="bg3" x1="0" y1="0" x2="0" y2="1"><stop offset="0" stop-color="#3f9ff0"/><stop offset="1" stop-color="#2178d0"/></linearGradient></defs><rect width="17" height="17" rx="4" fill="url(#bg3)"/></svg>
<svg class="b" style="left:14px;top:609px;" width="24" height="22" viewBox="0 0 24 22"><defs><linearGradient id="bg4" x1="0" y1="0" x2="0" y2="1"><stop offset="0" stop-color="#3f9ff0"/><stop offset="1" stop-color="#2178d0"/></linearGradient></defs><path d="M8.500 0L17 16H0z" fill="url(#bg4)"/><path d="M23 14.500v6h-6z" fill="#6a6a6a"/></svg>
<div id="tool_A" class="t" style="left:13.5px;top:632.30px;height:34px;line-height:34px;font-size:24px;color:#d8d8d8;font-weight:400;letter-spacing:-0.344px;font-family:'Liberation Serif',serif;">A</div>
<svg class="b" style="left:31px;top:655.5px;" width="7" height="7" viewBox="0 0 7 7"><path d="M7 0v7H0z" fill="#6a6a6a"/></svg>
<svg class="b" style="left:12px;top:672px;" width="20" height="19" viewBox="0 0 20 19"><g transform="rotate(45 10 9)"><rect x="7" y="-2" width="6" height="5" rx="2.500" fill="#c08a3a"/><rect x="5.500" y="2.500" width="9" height="2.800" rx="1" fill="#8a5f22"/><path d="M7.800 5.300h4.400v9l-2.200 4-2.200-4z" fill="#9a9a9a"/><path d="M9.200 5.300h1.600v9h-1.600z" fill="#d8d8d8"/></g></svg>
<svg class="b" style="left:11px;top:703px;" width="22" height="22" viewBox="0 0 22 22"><g fill="#f7c9a4" stroke="#fff" stroke-width="0.900" stroke-linejoin="round"><path d="M5.200 12.500L3.800 6.200c-0.400-1.500 1.600-2 2-0.500l1.200 4.300 0.300-7.300c0-1.600 2.100-1.600 2.200 0l0.200 6.800 1-7.200c0.200-1.500 2.300-1.200 2.100 0.300l-0.800 7.400 2-5.600c0.500-1.400 2.400-0.700 2 0.700l-2.200 7 2.300-2c1.200-1 2.500 0.300 1.500 1.500l-4.300 5.400c-1.200 1.500-2.600 2.200-4.500 2.200-2.800 0-4.300-1.500-4.800-4.200z"/></g></svg>
<svg class="b" style="left:12px;top:736px;" width="20" height="20" viewBox="0 0 20 20"><circle cx="8" cy="8" r="6.500" fill="#6ab0f0" stroke="#f2f2f2" stroke-width="1.600"/><circle cx="6.500" cy="6.500" r="3" fill="#b8dcff" opacity=".7"/><path d="M13 13l5 5" stroke="#e0894a" stroke-width="2.200" stroke-linecap="round"/></svg>
<div class="b" style="left:44px;top:137px;width:294px;height:23px;background:#262626;"></div>
<div class="b" style="left:52.7px;top:143.5px;width:1.3px;height:9px;background:#4a4a4a;"></div><div class="b" style="left:55.7px;top:143.5px;width:1.3px;height:9px;background:#4a4a4a;"></div>
<div class="b" style="left:65px;top:138px;width:43px;height:22px;background:#383838;border-radius:2px 2px 0 0;"></div>
<div id="p_colour" class="t" style="left:69px;top:140.80px;height:17px;line-height:17px;font-size:12px;color:#f2f2f2;font-weight:400;letter-spacing:-0.072px;-webkit-text-stroke:0.600px currentColor;">Colour</div>
<svg class="b" style="left:320px;top:143px;" width="16" height="11" viewBox="0 0 16 11"><rect x="0" y="0.0" width="9.500" height="1.100" fill="#d0d0d0"/><rect x="0" y="2.3" width="9.500" height="1.100" fill="#d0d0d0"/><rect x="0" y="4.6" width="9.500" height="1.100" fill="#d0d0d0"/><rect x="0" y="6.9" width="9.500" height="1.100" fill="#d0d0d0"/><path d="M11 7h4.200l-2.100 3z" fill="#e8e8e8"/></svg>
<div class="b" style="left:44px;top:160px;width:294px;height:236px;background:#383838;box-shadow:inset 0 1px 0 #1e1e1e;"></div>
<svg class="b" style="left:52px;top:165px;" width="50" height="50" viewBox="0 0 50 50"><circle cx="17.500" cy="19" r="11.250" fill="none" stroke="#555" stroke-width="7.500"/><circle cx="17.500" cy="19" r="15" fill="none" stroke="#6e6e6e" stroke-width="0.800"/><circle cx="17.500" cy="19" r="7.500" fill="none" stroke="#6e6e6e" stroke-width="0.800"/><circle cx="29.100" cy="30.600" r="14.800" fill="#383838"/><circle cx="29.100" cy="30.600" r="13.600" fill="#ff4d84" stroke="#2c3a38" stroke-width="1"/><circle cx="29.100" cy="30.600" r="14.700" fill="none" stroke="#6a6a6a" stroke-width="0.900"/><circle cx="9.600" cy="38.900" r="5.700" fill="#fff" stroke="#151515" stroke-width="1.200"/><path d="M5.800 42.700l7.600-7.600" stroke="#f0202a" stroke-width="1.500"/></svg>
<svg class="b" style="left:82px;top:170px;" width="14" height="14" viewBox="0 0 14 14"><path d="M3.500 3.200c4.500-0.500 7.500 2.800 7.300 7" fill="none" stroke="#cfcfcf" stroke-width="1.400"/><path d="M1.200 4.200l4.300-3.200 0.600 5.200z" fill="#cfcfcf"/><path d="M8 9.500l3.200 3.800 2.200-4.800z" fill="#cfcfcf"/></svg>
<svg class="b" style="left:106px;top:169.5px;" width="20" height="20" viewBox="0 0 20 20"><defs><linearGradient id="edg" x1="0" y1="0" x2="1" y2="0"><stop offset="0" stop-color="#6a6a6a"/><stop offset="0.500" stop-color="#d8d8d8"/><stop offset="1" stop-color="#7a7a7a"/></linearGradient></defs><g transform="rotate(45 10 10)"><ellipse cx="10" cy="0.500" rx="3.400" ry="3.200" fill="#c9932e"/><rect x="5.500" y="3" width="9" height="2.600" rx="1.200" fill="#a87a28"/><path d="M7.700 5.600h4.600v8.500l-2.300 5-2.300-5z" fill="url(#edg)"/></g></svg>
<div class="b" style="left:127.6px;top:169.7px;width:16.6px;height:16.6px;background:#d3a982;border-radius:50%;border:1.300px solid #2e2e2e;box-shadow:0 0 0 0.900px #606060;"></div>
<div class="b" style="left:115px;top:184px;width:170px;height:170px;background:conic-gradient(from 90deg,#ff0000,#ffff00,#00ff00,#00ffff,#0000ff,#ff00ff,#ff0000);border-radius:50%;-webkit-mask:radial-gradient(circle,transparent 68.0px,#000 69.0px);mask:radial-gradient(circle,transparent 68.0px,#000 69.0px);"></div>
<svg class="b" style="left:100px;top:170px;" width="200" height="200" viewBox="0 0 200 200"><defs><linearGradient id="th" gradientUnits="userSpaceOnUse" x1="263.5" y1="246.5" x2="167.6" y2="279.3"><stop offset="0" stop-color="#ff0051"/><stop offset="0.500" stop-color="#ff0051" stop-opacity="0.700"/><stop offset="1" stop-color="#ff0051" stop-opacity="0"/></linearGradient><linearGradient id="tw" gradientUnits="userSpaceOnUse" x1="186.5" y1="334.6" x2="206.1" y2="235.2"><stop offset="0" stop-color="#fff"/><stop offset="1" stop-color="#fff" stop-opacity="0"/></linearGradient></defs><g transform="translate(-100,-170)"><g style="isolation:isolate"><path d="M263.500 246.500L148.600 223.800L186.500 334.600z" fill="#000"/><path d="M263.500 246.500L148.600 223.800L186.500 334.600z" fill="url(#th)"/><path d="M263.500 246.500L148.600 223.800L186.500 334.600z" fill="url(#tw)" style="mix-blend-mode:screen"/></g><circle cx="273" cy="243.500" r="4.600" fill="#ff0051" stroke="#333" stroke-width="2.600"/><circle cx="273" cy="243.500" r="4.600" fill="#ff0051" stroke="#fff" stroke-width="1.600"/><circle cx="240.500" cy="273.800" r="4.600" fill="#ff4d84" stroke="#333" stroke-width="2.600"/><circle cx="240.500" cy="273.800" r="4.600" fill="#ff4d84" stroke="#fff" stroke-width="1.600"/></g></svg>
<div id="hsl0" class="t" style="left:54px;top:300.60px;height:17px;line-height:17px;font-size:12px;color:#ececec;font-weight:400;letter-spacing:-0.472px;-webkit-text-stroke:0.600px currentColor;">H: 341</div>
<div id="hsl1" class="t" style="left:54px;top:315.00px;height:17px;line-height:17px;font-size:12px;color:#ececec;font-weight:400;letter-spacing:-0.341px;-webkit-text-stroke:0.600px currentColor;">S: 100</div>
<div id="hsl2" class="t" style="left:55px;top:329.40px;height:17px;line-height:17px;font-size:12px;color:#ececec;font-weight:400;letter-spacing:-0.176px;-webkit-text-stroke:0.600px currentColor;">L: 65</div>
<div id="c_opac" class="t" style="left:53.2px;top:348.70px;height:17px;line-height:17px;font-size:12px;color:#ececec;font-weight:400;letter-spacing:0.052px;-webkit-text-stroke:0.25px currentColor;">Opacity</div>
<div class="b" style="left:54.8px;top:368.8px;width:13.2px;height:13.2px;background:#ff4d84;border-radius:50%;"></div>
<div class="b" style="left:75.7px;top:371px;width:177px;height:9px;background:#fff;border-radius:4.500px;overflow:hidden;box-shadow:0 0 0 1px #262626,0 1.500px 0 0 #777;"><div class="b" style="inset:0;background:conic-gradient(#b0b0b0 25%,#fff 0 50%,#b0b0b0 0 75%,#fff 0) 1px 0/9px 9px"></div><div class="b" style="inset:0;background:linear-gradient(90deg,rgba(34,34,34,0) 0%,rgba(34,34,34,.25) 25%,rgba(34,34,34,.6) 60%,rgba(34,34,34,.88) 100%)"></div></div>
<div class="b" style="left:241.8px;top:369.2px;width:12px;height:12px;background:#1c1c1c;border-radius:50%;border:1.800px solid #fff;box-shadow:0 0 0 1px #1a1a1a, inset 0 0 0 1px #000;"></div>
<div class="b" style="left:265px;top:364px;width:67px;height:22px;background:#2b2b2b;border:1px solid #1d1d1d;border-radius:3px;box-shadow:0 1px 0 rgba(255,255,255,.07);"></div>
<div class="b" style="left:313px;top:365px;width:1px;height:20px;background:#1d1d1d;"></div>
<div id="c_100" class="t" style="left:269px;top:368.70px;height:16px;line-height:16px;font-size:11.5px;color:#ececec;font-weight:400;letter-spacing:-0.277px;-webkit-text-stroke:0.25px currentColor;">100 %</div>
<svg class="b" style="left:318.5px;top:373px;" width="8" height="6.5" viewBox="0 0 8 6.5"><path d="M0 0h8L4.0 6.5z" fill="#d8d8d8"/></svg>
<div class="b" style="left:44px;top:397px;width:294px;height:23px;background:#262626;"></div>
<div class="b" style="left:52.7px;top:403.5px;width:1.3px;height:9px;background:#4a4a4a;"></div><div class="b" style="left:55.7px;top:403.5px;width:1.3px;height:9px;background:#4a4a4a;"></div>
<div class="b" style="left:65px;top:398px;width:60.5px;height:22px;background:#383838;border-radius:2px 2px 0 0;"></div>
<div id="p_char" class="t" style="left:68.8px;top:400.50px;height:17px;line-height:17px;font-size:12px;color:#f2f2f2;font-weight:400;letter-spacing:0.002px;-webkit-text-stroke:0.600px currentColor;">Character</div>
<div id="p_para" class="t" style="left:131px;top:400.50px;height:17px;line-height:17px;font-size:12px;color:#8c8c8c;font-weight:400;letter-spacing:-0.256px;-webkit-text-stroke:0.25px currentColor;">Paragraph</div>
<div id="p_ts" class="t" style="left:196px;top:400.50px;height:17px;line-height:17px;font-size:12px;color:#8c8c8c;font-weight:400;letter-spacing:-0.073px;-webkit-text-stroke:0.25px currentColor;">Text Styles</div>
<div id="p_eff" class="t" style="left:263px;top:400.50px;height:17px;line-height:17px;font-size:12px;color:#8c8c8c;font-weight:400;letter-spacing:0.089px;-webkit-text-stroke:0.25px currentColor;">Effects</div>
<div class="b" style="left:190px;top:402.5px;width:1px;height:11px;background:#4a4a4a;"></div>
<div class="b" style="left:258px;top:402.5px;width:1px;height:11px;background:#4a4a4a;"></div>
<svg class="b" style="left:320px;top:403px;" width="16" height="11" viewBox="0 0 16 11"><rect x="0" y="0.0" width="9.500" height="1.100" fill="#d0d0d0"/><rect x="0" y="2.3" width="9.500" height="1.100" fill="#d0d0d0"/><rect x="0" y="4.6" width="9.500" height="1.100" fill="#d0d0d0"/><rect x="0" y="6.9" width="9.500" height="1.100" fill="#d0d0d0"/><path d="M11 7h4.200l-2.100 3z" fill="#e8e8e8"/></svg>
<div class="b" style="left:44px;top:420px;width:294px;height:558px;background:#383838;"></div>
<div class="b" style="left:56px;top:430.5px;width:88px;height:21px;background:#323232;border:1px solid #1d1d1d;border-radius:3px;box-shadow:0 1px 0 rgba(255,255,255,.07);"></div>
<div id="ch_allf" class="t" style="left:61px;top:433.70px;height:17px;line-height:17px;font-size:12px;color:#ececec;font-weight:400;letter-spacing:-0.086px;-webkit-text-stroke:0.25px currentColor;">All Fonts</div>
<svg class="b" style="left:131px;top:436px;" width="5" height="10" viewBox="0 0 5 10"><path d="M0 3.500L2.500 0.500 5 3.500zM0 6.500L2.500 9.500 5 6.500z" fill="#d8d8d8"/></svg>
<div class="b" style="left:147.5px;top:430.5px;width:182px;height:21px;background:#2b2b2b;border:1px solid #1d1d1d;border-radius:3px;box-shadow:0 1px 0 rgba(255,255,255,.07);"></div>
<div id="ch_arial" class="t" style="left:151.6px;top:434.20px;height:17px;line-height:17px;font-size:12px;color:#ececec;font-weight:400;letter-spacing:-0.104px;-webkit-text-stroke:0.25px currentColor;">Arial</div>
<div class="b" style="left:310px;top:431.5px;width:1px;height:19px;background:#1d1d1d;"></div>
<svg class="b" style="left:316px;top:438.5px;" width="8" height="6.5" viewBox="0 0 8 6.5"><path d="M0 0h8L4.0 6.5z" fill="#d8d8d8"/></svg>
<div class="b" style="left:56.5px;top:456px;width:87px;height:21px;background:#2b2b2b;border:1px solid #1d1d1d;border-radius:3px;box-shadow:0 1px 0 rgba(255,255,255,.07);"></div>
<div id="ch_12pt" class="t" style="left:60.5px;top:459.20px;height:17px;line-height:17px;font-size:12px;color:#ececec;font-weight:400;letter-spacing:-0.301px;-webkit-text-stroke:0.25px currentColor;">12 pt</div>
<div class="b" style="left:125.5px;top:457px;width:1px;height:19px;background:#1d1d1d;"></div>
<svg class="b" style="left:130.5px;top:464px;" width="8" height="6.5" viewBox="0 0 8 6.5"><path d="M0 0h8L4.0 6.5z" fill="#d8d8d8"/></svg>
<div class="b" style="left:147.5px;top:456px;width:125px;height:21px;background:#323232;border:1px solid #1d1d1d;border-radius:3px;box-shadow:0 1px 0 rgba(255,255,255,.07);"></div>
<div id="ch_reg" class="t" style="left:152px;top:459.20px;height:17px;line-height:17px;font-size:12px;color:#ececec;font-weight:400;letter-spacing:-0.305px;-webkit-text-stroke:0.25px currentColor;">Regular</div>
<svg class="b" style="left:259.5px;top:462px;" width="5" height="10" viewBox="0 0 5 10"><path d="M0 3.500L2.500 0.500 5 3.500zM0 6.500L2.500 9.500 5 6.500z" fill="#d8d8d8"/></svg>
<div class="b" style="left:277px;top:457.5px;width:24px;height:19.5px;background:#000;border-radius:2px;box-shadow:0 0 0 1px #2a2a2a,0 0 0 2px #444;"></div>
<svg class="b" style="left:304.5px;top:457.5px;border-radius:2px;box-shadow:0 0 0 1px #222;" width="22.5" height="19.5" viewBox="0 0 22.5 19.5"><rect width="22.5" height="19.5" fill="#fff"/><path d="M0 0L22.5 19.5" stroke="#e8202a" stroke-width="1.600"/></svg>
<div class="b" style="left:56.5px;top:481.5px;width:270.5px;height:21px;background:#2b2b2b;border:1px solid #1d1d1d;border-radius:3px;box-shadow:0 1px 0 rgba(255,255,255,.07);"></div>
<div id="ch_nostyle" class="t" style="left:60.5px;top:484.50px;height:17px;line-height:17px;font-size:12px;color:#ececec;font-weight:400;letter-spacing:0.074px;-webkit-text-stroke:0.25px currentColor;">[No Style]</div>
<div class="b" style="left:308.5px;top:482.5px;width:1px;height:19px;background:#1d1d1d;"></div>
<svg class="b" style="left:313.8px;top:489.5px;" width="8" height="6.5" viewBox="0 0 8 6.5"><path d="M0 0h8L4.0 6.5z" fill="#d8d8d8"/></svg>
<div class="b" style="left:44px;top:511.5px;width:294px;height:23.5px;background:#262626;"></div>
<svg class="b" style="left:55px;top:519.25px;" width="10.5" height="8.5" viewBox="0 0 10.5 8.5"><path d="M0 0h10.500L5.250 8.500z" fill="#9a9a9a"/></svg>
<div id="s_under" class="t" style="left:71.3px;top:515.75px;height:17px;line-height:17px;font-size:12px;color:#ececec;font-weight:400;letter-spacing:0.037px;-webkit-text-stroke:0.25px currentColor;">Underline and Strikethrough</div>
<div class="b" style="left:56.7px;top:541px;width:94.6px;height:21.5px;background:#333;border:1px solid #1d1d1d;border-radius:3px;box-shadow:0 1px 0 rgba(255,255,255,.07);overflow:hidden;"></div><div class="b" style="left:57.7px;top:542px;width:30.53333333333333px;height:19.5px;background:#252525;"></div><div class="b" style="left:87.73333333333333px;top:542px;width:1px;height:19.5px;background:#1f1f1f;"></div><div class="b" style="left:119.26666666666667px;top:542px;width:1px;height:19.5px;background:#1f1f1f;"></div>
<div id="t34" class="t" style="left:72.46666666666667px;transform:translateX(-50%);top:541.30px;height:21px;line-height:21px;font-size:15px;color:#f0f0f0;font-weight:400;-webkit-text-stroke:0.25px currentColor;text-underline-offset:1.500px;text-decoration-thickness:1px;">U</div>
<div id="t35" class="t" style="left:104.0px;transform:translateX(-50%);top:541.30px;height:21px;line-height:21px;font-size:15px;color:#f0f0f0;font-weight:400;-webkit-text-stroke:0.25px currentColor;text-decoration:underline;text-underline-offset:1.500px;text-decoration-thickness:1px;">U</div>
<div id="t36" class="t" style="left:135.53333333333333px;transform:translateX(-50%);top:541.30px;height:21px;line-height:21px;font-size:15px;color:#f0f0f0;font-weight:400;-webkit-text-stroke:0.25px currentColor;text-decoration:underline;text-decoration-style:double;text-underline-offset:1.500px;text-decoration-thickness:1px;">U</div>
<svg class="b" style="left:159px;top:542px;border-radius:2px;box-shadow:0 0 0 1px #222;" width="22.5" height="19.5" viewBox="0 0 22.5 19.5"><rect width="22.5" height="19.5" fill="#fff"/><path d="M0 0L22.5 19.5" stroke="#e8202a" stroke-width="1.600"/></svg>
<div class="b" style="left:191.3px;top:541px;width:94.7px;height:21.5px;background:#333;border:1px solid #1d1d1d;border-radius:3px;box-shadow:0 1px 0 rgba(255,255,255,.07);overflow:hidden;"></div><div class="b" style="left:192.3px;top:542px;width:30.566666666666666px;height:19.5px;background:#252525;"></div><div class="b" style="left:222.36666666666667px;top:542px;width:1px;height:19.5px;background:#1f1f1f;"></div><div class="b" style="left:253.93333333333334px;top:542px;width:1px;height:19.5px;background:#1f1f1f;"></div>
<div id="t37" class="t" style="left:207.08333333333334px;transform:translateX(-50%);top:541.30px;height:21px;line-height:21px;font-size:15px;color:#f0f0f0;font-weight:400;-webkit-text-stroke:0.25px currentColor;text-decoration-thickness:1px;">S</div>
<div id="t38" class="t" style="left:238.65px;transform:translateX(-50%);top:541.30px;height:21px;line-height:21px;font-size:15px;color:#f0f0f0;font-weight:400;-webkit-text-stroke:0.25px currentColor;text-decoration:line-through;text-decoration-thickness:1px;">S</div>
<div id="t39" class="t" style="left:270.2166666666667px;transform:translateX(-50%);top:541.30px;height:21px;line-height:21px;font-size:15px;color:#f0f0f0;font-weight:400;-webkit-text-stroke:0.25px currentColor;text-decoration:line-through;text-decoration-style:double;text-decoration-thickness:1px;">S</div>
<svg class="b" style="left:293.3px;top:542px;border-radius:2px;box-shadow:0 0 0 1px #222;" width="22.5" height="19.5" viewBox="0 0 22.5 19.5"><rect width="22.5" height="19.5" fill="#fff"/><path d="M0 0L22.5 19.5" stroke="#e8202a" stroke-width="1.600"/></svg>
<div class="b" style="left:44px;top:573.6px;width:294px;height:23.5px;background:#262626;"></div>
<svg class="b" style="left:55px;top:581.35px;" width="10.5" height="8.5" viewBox="0 0 10.5 8.5"><path d="M0 0h10.500L5.250 8.500z" fill="#9a9a9a"/></svg>
<div id="s_pos" class="t" style="left:71.3px;top:577.85px;height:17px;line-height:17px;font-size:12px;color:#ececec;font-weight:400;letter-spacing:-0.017px;-webkit-text-stroke:0.25px currentColor;">Positioning and Transform</div>
<div class="b" style="left:81.3px;top:603.4px;width:69px;height:21px;background:#2b2b2b;border:1px solid #1d1d1d;border-radius:3px;box-shadow:0 1px 0 rgba(255,255,255,.07);"></div>
<div class="b" style="left:131.8px;top:604.4px;width:1px;height:19px;background:#1d1d1d;"></div>
<div id="pl_613" class="t" style="left:84.5px;top:606.30px;height:17px;line-height:17px;font-size:12px;color:#ececec;font-weight:400;letter-spacing:0.500px;-webkit-text-stroke:0.25px currentColor;">(0 ‰)</div>
<svg class="b" style="left:137.3px;top:610.9px;" width="8" height="6.5" viewBox="0 0 8 6.5"><path d="M0 0h8L4.0 6.5z" fill="#d8d8d8"/></svg>
<div class="b" style="left:156px;top:603.9px;width:11.5px;height:20px;background:#303030;border-radius:5.500px;border:1px solid #222;"></div><svg class="b" style="left:158.8px;top:607.4px;" width="6" height="13" viewBox="0 0 6 13"><path d="M0 4.500L3 1l3 3.500zM0 8.500L3 12l3-3.500z" fill="#d8d8d8"/></svg>
<div class="b" style="left:81.3px;top:627.8px;width:69px;height:21px;background:#2b2b2b;border:1px solid #1d1d1d;border-radius:3px;box-shadow:0 1px 0 rgba(255,255,255,.07);"></div>
<div class="b" style="left:131.8px;top:628.8px;width:1px;height:19px;background:#1d1d1d;"></div>
<div id="pl_638" class="t" style="left:84.5px;top:630.70px;height:17px;line-height:17px;font-size:12px;color:#ececec;font-weight:400;letter-spacing:0.992px;-webkit-text-stroke:0.25px currentColor;">0 ‰</div>
<svg class="b" style="left:137.3px;top:635.3px;" width="8" height="6.5" viewBox="0 0 8 6.5"><path d="M0 0h8L4.0 6.5z" fill="#d8d8d8"/></svg>
<div class="b" style="left:156px;top:628.3px;width:11.5px;height:20px;background:#303030;border-radius:5.500px;border:1px solid #222;"></div><svg class="b" style="left:158.8px;top:631.8px;" width="6" height="13" viewBox="0 0 6 13"><path d="M0 4.500L3 1l3 3.500zM0 8.500L3 12l3-3.500z" fill="#d8d8d8"/></svg>
<div class="b" style="left:81.3px;top:653.0px;width:69px;height:21px;background:#2b2b2b;border:1px solid #1d1d1d;border-radius:3px;box-shadow:0 1px 0 rgba(255,255,255,.07);"></div>
<div class="b" style="left:131.8px;top:654.0px;width:1px;height:19px;background:#1d1d1d;"></div>
<div id="pl_663" class="t" style="left:84.5px;top:655.90px;height:17px;line-height:17px;font-size:12px;color:#ececec;font-weight:400;letter-spacing:0.161px;-webkit-text-stroke:0.25px currentColor;">0 pt</div>
<svg class="b" style="left:137.3px;top:660.5px;" width="8" height="6.5" viewBox="0 0 8 6.5"><path d="M0 0h8L4.0 6.5z" fill="#d8d8d8"/></svg>
<div class="b" style="left:156px;top:653.5px;width:11.5px;height:20px;background:#303030;border-radius:5.500px;border:1px solid #222;"></div><svg class="b" style="left:158.8px;top:657.0px;" width="6" height="13" viewBox="0 0 6 13"><path d="M0 4.500L3 1l3 3.500zM0 8.500L3 12l3-3.500z" fill="#d8d8d8"/></svg>
<div class="b" style="left:81.3px;top:678.7px;width:69px;height:21px;background:#2b2b2b;border:1px solid #1d1d1d;border-radius:3px;box-shadow:0 1px 0 rgba(255,255,255,.07);"></div>
<div class="b" style="left:131.8px;top:679.7px;width:1px;height:19px;background:#1d1d1d;"></div>
<div id="pl_689" class="t" style="left:84.5px;top:681.60px;height:17px;line-height:17px;font-size:12px;color:#ececec;font-weight:400;letter-spacing:0.037px;-webkit-text-stroke:0.25px currentColor;">(12.4 pt)</div>
<svg class="b" style="left:137.3px;top:686.2px;" width="8" height="6.5" viewBox="0 0 8 6.5"><path d="M0 0h8L4.0 6.5z" fill="#d8d8d8"/></svg>
<div class="b" style="left:156px;top:679.2px;width:11.5px;height:20px;background:#303030;border-radius:5.500px;border:1px solid #222;"></div><svg class="b" style="left:158.8px;top:682.7px;" width="6" height="13" viewBox="0 0 6 13"><path d="M0 4.500L3 1l3 3.500zM0 8.500L3 12l3-3.500z" fill="#d8d8d8"/></svg>
<div class="b" style="left:212.5px;top:603.4px;width:69px;height:21px;background:#2b2b2b;border:1px solid #1d1d1d;border-radius:3px;box-shadow:0 1px 0 rgba(255,255,255,.07);"></div>
<div id="pr_613" class="t" style="left:216px;top:606.30px;height:17px;line-height:17px;font-size:12px;color:#ececec;font-weight:400;letter-spacing:-0.156px;-webkit-text-stroke:0.25px currentColor;">0 °</div>
<div class="b" style="left:286px;top:603.9px;width:11.5px;height:20px;background:#303030;border-radius:5.500px;border:1px solid #222;"></div><svg class="b" style="left:288.8px;top:607.4px;" width="6" height="13" viewBox="0 0 6 13"><path d="M0 4.500L3 1l3 3.500zM0 8.500L3 12l3-3.500z" fill="#d8d8d8"/></svg>
<div class="b" style="left:212.5px;top:627.8px;width:69px;height:21px;background:#2b2b2b;border:1px solid #1d1d1d;border-radius:3px;box-shadow:0 1px 0 rgba(255,255,255,.07);"></div>
<div id="pr_638" class="t" style="left:216px;top:631.20px;height:16px;line-height:16px;font-size:11.5px;color:#ececec;font-weight:400;letter-spacing:-0.277px;-webkit-text-stroke:0.25px currentColor;">100 %</div>
<div class="b" style="left:286px;top:628.3px;width:11.5px;height:20px;background:#303030;border-radius:5.500px;border:1px solid #222;"></div><svg class="b" style="left:288.8px;top:631.8px;" width="6" height="13" viewBox="0 0 6 13"><path d="M0 4.500L3 1l3 3.500zM0 8.500L3 12l3-3.500z" fill="#d8d8d8"/></svg>
<div class="b" style="left:212.5px;top:653.0px;width:69px;height:21px;background:#2b2b2b;border:1px solid #1d1d1d;border-radius:3px;box-shadow:0 1px 0 rgba(255,255,255,.07);"></div>
<div id="pr_663" class="t" style="left:216px;top:656.40px;height:16px;line-height:16px;font-size:11.5px;color:#ececec;font-weight:400;letter-spacing:-0.277px;-webkit-text-stroke:0.25px currentColor;">100 %</div>
<div class="b" style="left:286px;top:653.5px;width:11.5px;height:20px;background:#303030;border-radius:5.500px;border:1px solid #222;"></div><svg class="b" style="left:288.8px;top:657.0px;" width="6" height="13" viewBox="0 0 6 13"><path d="M0 4.500L3 1l3 3.500zM0 8.500L3 12l3-3.500z" fill="#d8d8d8"/></svg>
<div id="ic_va1" class="t" style="left:59.5px;top:607.70px;height:15px;line-height:15px;font-size:11px;color:#e6e6e6;font-weight:400;letter-spacing:-0.617px;-webkit-text-stroke:0.25px currentColor;letter-spacing:-0.500px;">V/A</div>
<div class="b" style="left:67px;top:620.5px;width:9px;height:1px;background:#e6e6e6;"></div>
<div id="ic_va2" class="t" style="left:60px;top:630.70px;height:15px;line-height:15px;font-size:11px;color:#e6e6e6;font-weight:400;letter-spacing:0.641px;-webkit-text-stroke:0.25px currentColor;">VA</div>
<svg class="b" style="left:59.5px;top:643.5px;" width="16" height="5" viewBox="0 0 16 5"><path d="M0 2.500h16M2.500 0L0 2.500 2.500 5M13.500 0L16 2.500 13.500 5" fill="none" stroke="#e6e6e6" stroke-width="1"/></svg>
<div id="ic_a3" class="t" style="left:66px;top:654.70px;height:15px;line-height:15px;font-size:11px;color:#e6e6e6;font-weight:400;-webkit-text-stroke:0.25px currentColor;">A</div>
<div class="b" style="left:65.5px;top:667.5px;width:9px;height:1px;background:#e6e6e6;"></div>
<svg class="b" style="left:59.5px;top:663px;" width="4" height="9" viewBox="0 0 4 9"><path d="M2 0v9M0 2.500L2 0l2 2.500M0 6.500L2 9l2-2.500" fill="none" stroke="#e6e6e6" stroke-width="1"/></svg>
<div id="t51" class="t" style="left:66.5px;top:679.20px;height:13px;line-height:13px;font-size:9px;color:#e6e6e6;font-weight:400;-webkit-text-stroke:0.25px currentColor;">A</div>
<div id="t52" class="t" style="left:66.5px;top:687.70px;height:13px;line-height:13px;font-size:9px;color:#e6e6e6;font-weight:400;-webkit-text-stroke:0.25px currentColor;">A</div>
<div class="b" style="left:65.5px;top:689.3px;width:8px;height:1px;background:#e6e6e6;"></div>
<div class="b" style="left:65.5px;top:697.8px;width:8px;height:1px;background:#e6e6e6;"></div>
<svg class="b" style="left:60px;top:683px;" width="4" height="14" viewBox="0 0 4 14"><path d="M2 0v14M0 2.500L2 0l2 2.500M0 11.500L2 14l2-2.500" fill="none" stroke="#e6e6e6" stroke-width="1"/></svg>
<div id="t53" class="t" style="left:198.5px;transform:translateX(-50%);top:603.30px;height:21px;line-height:21px;font-size:15px;color:#e6e6e6;font-weight:400;font-family:'Liberation Serif',serif;font-style:italic;">T</div>
<div id="t54" class="t" style="left:198.5px;transform:translateX(-50%);top:626.80px;height:21px;line-height:21px;font-size:15px;color:#e6e6e6;font-weight:400;font-family:'Liberation Serif',serif;">T</div>
<svg class="b" style="left:193px;top:643.5px;" width="11" height="5" viewBox="0 0 11 5"><path d="M0 2.500h11M2 0.500L0 2.500 2 4.500M9 0.500l2 2-2 2" fill="none" stroke="#e6e6e6" stroke-width="1"/></svg>
<div id="t55" class="t" style="left:200.5px;transform:translateX(-50%);top:653.10px;height:21px;line-height:21px;font-size:15px;color:#e6e6e6;font-weight:400;font-family:'Liberation Serif',serif;">T</div>
<svg class="b" style="left:192px;top:658px;" width="4" height="11" viewBox="0 0 4 11"><path d="M2 0v11M0 2L2 0l2 2M0 9l2 2 2-2" fill="none" stroke="#e6e6e6" stroke-width="1"/></svg>
<div class="b" style="left:44px;top:711px;width:294px;height:24px;background:#262626;"></div>
<svg class="b" style="left:55px;top:719.0px;" width="10.5" height="8.5" viewBox="0 0 10.5 8.5"><path d="M0 0h10.500L5.250 8.500z" fill="#9a9a9a"/></svg>
<div id="s_typo" class="t" style="left:71.3px;top:715.50px;height:17px;line-height:17px;font-size:12px;color:#ececec;font-weight:400;letter-spacing:-0.002px;-webkit-text-stroke:0.25px currentColor;">Typography</div>
<div class="b" style="left:59px;top:743.3px;width:245px;height:21.7px;background:#333;border:1px solid #1d1d1d;border-radius:3px;box-shadow:0 1px 0 rgba(255,255,255,.07);overflow:hidden;"></div><div class="b" style="left:60.0px;top:744.3px;width:29.625px;height:19.7px;background:#252525;"></div><div class="b" style="left:89.125px;top:744.3px;width:1px;height:19.7px;background:#1f1f1f;"></div><div class="b" style="left:119.75px;top:744.3px;width:1px;height:19.7px;background:#1f1f1f;"></div><div class="b" style="left:150.375px;top:744.3px;width:1px;height:19.7px;background:#1f1f1f;"></div><div class="b" style="left:181.0px;top:744.3px;width:1px;height:19.7px;background:#1f1f1f;"></div><div class="b" style="left:211.625px;top:744.3px;width:1px;height:19.7px;background:#1f1f1f;"></div><div class="b" style="left:242.25px;top:744.3px;width:1px;height:19.7px;background:#1f1f1f;"></div><div class="b" style="left:272.875px;top:744.3px;width:1px;height:19.7px;background:#1f1f1f;"></div>
<div id="t57" class="t" style="left:74.3125px;transform:translateX(-50%);top:742.60px;height:24px;line-height:24px;font-size:17px;color:#e6e6e6;font-weight:400;font-family:'Liberation Serif',serif;">fi</div>
<div id="t58" class="t" style="left:104.9375px;transform:translateX(-50%);top:742.10px;height:25px;line-height:25px;font-size:18px;color:#8a8a8a;font-weight:400;font-family:'Liberation Serif',serif;font-style:italic;">a</div>
<div id="t59" class="t" style="left:135.5625px;transform:translateX(-50%);top:744.60px;height:20px;line-height:20px;font-size:14px;color:#e6e6e6;font-weight:400;font-family:'Liberation Serif',serif;">1<span style="font-size:9px;position:relative;top:-3.500px">st</span></div>
<div id="t60" class="t" style="left:166.1875px;transform:translateX(-50%);top:744.60px;height:20px;line-height:20px;font-size:14px;color:#e6e6e6;font-weight:400;font-family:'Liberation Serif',serif;">½</div>
<div id="t61" class="t" style="left:196.8125px;transform:translateX(-50%);top:746.00px;height:18px;line-height:18px;font-size:13px;color:#e6e6e6;font-weight:400;-webkit-text-stroke:0.25px currentColor;">S<span style="font-size:9px;position:relative;top:-5px">•</span></div>
<div id="t62" class="t" style="left:227.4375px;transform:translateX(-50%);top:746.00px;height:18px;line-height:18px;font-size:13px;color:#e6e6e6;font-weight:400;-webkit-text-stroke:0.25px currentColor;">S<span style="font-size:9px;position:relative;top:1px">•</span></div>
<div id="t63" class="t" style="left:258.0625px;transform:translateX(-50%);top:746.00px;height:18px;line-height:18px;font-size:13px;color:#e6e6e6;font-weight:400;font-family:'Liberation Serif',serif;">TT</div>
<div id="t64" class="t" style="left:288.6875px;transform:translateX(-50%);top:746.00px;height:18px;line-height:18px;font-size:13px;color:#e6e6e6;font-weight:400;font-family:'Liberation Serif',serif;">T<span style="font-size:9.500px">T</span></div>
<div class="b" style="left:44px;top:778.4px;width:294px;height:23.3px;background:#262626;"></div>
<svg class="b" style="left:55px;top:786.05px;" width="10.5" height="8.5" viewBox="0 0 10.5 8.5"><path d="M0 0h10.500L5.250 8.500z" fill="#9a9a9a"/></svg>
<div id="s_lang" class="t" style="left:71.3px;top:782.55px;height:17px;line-height:17px;font-size:12px;color:#ececec;font-weight:400;letter-spacing:-0.242px;-webkit-text-stroke:0.25px currentColor;">Language</div>
<div class="b" style="left:58px;top:809.5px;width:268.5px;height:24.5px;background:#323232;border:1px solid #1d1d1d;border-radius:3px;box-shadow:0 1px 0 rgba(255,255,255,.07);"></div>
<div id="ch_lang" class="t" style="left:63.3px;top:814.50px;height:17px;line-height:17px;font-size:12px;color:#ececec;font-weight:400;letter-spacing:-0.022px;-webkit-text-stroke:0.25px currentColor;">Unknown (en-JP)</div>
<svg class="b" style="left:312.3px;top:817.3px;" width="5" height="10" viewBox="0 0 5 10"><path d="M0 3.500L2.500 0.500 5 3.500zM0 6.500L2.500 9.500 5 6.500z" fill="#d8d8d8"/></svg>
<div class="b" style="left:338px;top:137px;width:2px;height:841px;background:#1c1c1c;"></div>
<div class="b" style="left:340px;top:136px;width:878px;height:24px;background:#222;"></div>
<div class="b" style="left:768px;top:137px;width:427px;height:22px;background:#2b2b2b;"></div>
<div id="tab1" class="t" style="left:554px;transform:translateX(-50%);top:140.70px;height:15px;line-height:15px;font-size:11px;color:#8a8a8a;font-weight:400;letter-spacing:-0.047px;-webkit-text-stroke:0.25px currentColor;">Marker</div>
<div id="tab2" class="t" style="left:981.5px;transform:translateX(-50%);top:140.70px;height:15px;line-height:15px;font-size:11px;color:#d4d4d4;font-weight:400;letter-spacing:-0.064px;-webkit-text-stroke:0.25px currentColor;">AnimatorTriggerReceiverIcon</div>
<div class="b" style="left:340px;top:160px;width:878px;height:22.5px;background:#333;"></div>
<div class="b" style="left:340px;top:160px;width:22.5px;height:818px;background:#333;"></div>
<div id="t69" class="t" style="left:346.8px;top:165.20px;height:15px;line-height:15px;font-size:11px;color:#c0c0c0;font-weight:400;-webkit-text-stroke:0.25px currentColor;">px</div>
<svg class="b" style="left:340px;top:160px;" width="878" height="22.5" viewBox="0 0 878 22.5"><g fill="#c4c4c4"><rect x="25.99" y="18.5" width="1" height="4"/><rect x="31.75" y="20.5" width="1" height="2"/><rect x="37.51" y="18.5" width="1" height="4"/><rect x="43.27" y="20.5" width="1" height="2"/><rect x="49.04" y="18.5" width="1" height="4"/><rect x="54.80" y="20.5" width="1" height="2"/><rect x="60.56" y="14.0" width="1" height="8.5"/><rect x="66.32" y="20.5" width="1" height="2"/><rect x="72.08" y="18.5" width="1" height="4"/><rect x="77.85" y="20.5" width="1" height="2"/><rect x="83.61" y="18.5" width="1" height="4"/><rect x="89.37" y="20.5" width="1" height="2"/><rect x="95.13" y="18.5" width="1" height="4"/><rect x="100.89" y="20.5" width="1" height="2"/><rect x="106.66" y="18.5" width="1" height="4"/><rect x="112.42" y="20.5" width="1" height="2"/><rect x="118.18" y="14.0" width="1" height="8.5"/><rect x="123.94" y="20.5" width="1" height="2"/><rect x="129.70" y="18.5" width="1" height="4"/><rect x="135.47" y="20.5" width="1" height="2"/><rect x="141.23" y="18.5" width="1" height="4"/><rect x="146.99" y="20.5" width="1" height="2"/><rect x="152.75" y="18.5" width="1" height="4"/><rect x="158.51" y="20.5" width="1" height="2"/><rect x="164.28" y="18.5" width="1" height="4"/><rect x="170.04" y="20.5" width="1" height="2"/><rect x="175.80" y="14.0" width="1" height="8.5"/><rect x="181.56" y="20.5" width="1" height="2"/><rect x="187.32" y="18.5" width="1" height="4"/><rect x="193.09" y="20.5" width="1" height="2"/><rect x="198.85" y="18.5" width="1" height="4"/><rect x="204.61" y="20.5" width="1" height="2"/><rect x="210.37" y="18.5" width="1" height="4"/><rect x="216.13" y="20.5" width="1" height="2"/><rect x="221.90" y="18.5" width="1" height="4"/><rect x="227.66" y="20.5" width="1" height="2"/><rect x="233.42" y="14.0" width="1" height="8.5"/><rect x="239.18" y="20.5" width="1" height="2"/><rect x="244.94" y="18.5" width="1" height="4"/><rect x="250.71" y="20.5" width="1" height="2"/><rect x="256.47" y="18.5" width="1" height="4"/><rect x="262.23" y="20.5" width="1" height="2"/><rect x="267.99" y="18.5" width="1" height="4"/><rect x="273.75" y="20.5" width="1" height="2"/><rect x="279.52" y="18.5" width="1" height="4"/><rect x="285.28" y="20.5" width="1" height="2"/><rect x="291.04" y="14.0" width="1" height="8.5"/><rect x="296.80" y="20.5" width="1" height="2"/><rect x="302.56" y="18.5" width="1" height="4"/><rect x="308.33" y="20.5" width="1" height="2"/><rect x="314.09" y="18.5" width="1" height="4"/><rect x="319.85" y="20.5" width="1" height="2"/><rect x="325.61" y="18.5" width="1" height="4"/><rect x="331.37" y="20.5" width="1" height="2"/><rect x="337.14" y="18.5" width="1" height="4"/><rect x="342.90" y="20.5" width="1" height="2"/><rect x="348.66" y="14.0" width="1" height="8.5"/><rect x="354.42" y="20.5" width="1" height="2"/><rect x="360.18" y="18.5" width="1" height="4"/><rect x="365.95" y="20.5" width="1" height="2"/><rect x="371.71" y="18.5" width="1" height="4"/><rect x="377.47" y="20.5" width="1" height="2"/><rect x="383.23" y="18.5" width="1" height="4"/><rect x="388.99" y="20.5" width="1" height="2"/><rect x="394.76" y="18.5" width="1" height="4"/><rect x="400.52" y="20.5" width="1" height="2"/><rect x="406.28" y="14.0" width="1" height="8.5"/><rect x="412.04" y="20.5" width="1" height="2"/><rect x="417.80" y="18.5" width="1" height="4"/><rect x="423.57" y="20.5" width="1" height="2"/><rect x="429.33" y="18.5" width="1" height="4"/><rect x="435.09" y="20.5" width="1" height="2"/><rect x="440.85" y="18.5" width="1" height="4"/><rect x="446.61" y="20.5" width="1" height="2"/><rect x="452.38" y="18.5" width="1" height="4"/><rect x="458.14" y="20.5" width="1" height="2"/><rect x="463.90" y="14.0" width="1" height="8.5"/><rect x="469.66" y="20.5" width="1" height="2"/><rect x="475.42" y="18.5" width="1" height="4"/><rect x="481.19" y="20.5" width="1" height="2"/><rect x="486.95" y="18.5" width="1" height="4"/><rect x="492.71" y="20.5" width="1" height="2"/><rect x="498.47" y="18.5" width="1" height="4"/><rect x="504.23" y="20.5" width="1" height="2"/><rect x="510.00" y="18.5" width="1" height="4"/><rect x="515.76" y="20.5" width="1" height="2"/><rect x="521.52" y="14.0" width="1" height="8.5"/><rect x="527.28" y="20.5" width="1" height="2"/><rect x="533.04" y="18.5" width="1" height="4"/><rect x="538.81" y="20.5" width="1" height="2"/><rect x="544.57" y="18.5" width="1" height="4"/><rect x="550.33" y="20.5" width="1" height="2"/><rect x="556.09" y="18.5" width="1" height="4"/><rect x="561.85" y="20.5" width="1" height="2"/><rect x="567.62" y="18.5" width="1" height="4"/><rect x="573.38" y="20.5" width="1" height="2"/><rect x="579.14" y="14.0" width="1" height="8.5"/><rect x="584.90" y="20.5" width="1" height="2"/><rect x="590.66" y="18.5" width="1" height="4"/><rect x="596.43" y="20.5" width="1" height="2"/><rect x="602.19" y="18.5" width="1" height="4"/><rect x="607.95" y="20.5" width="1" height="2"/><rect x="613.71" y="18.5" width="1" height="4"/><rect x="619.47" y="20.5" width="1" height="2"/><rect x="625.24" y="18.5" width="1" height="4"/><rect x="631.00" y="20.5" width="1" height="2"/><rect x="636.76" y="14.0" width="1" height="8.5"/><rect x="642.52" y="20.5" width="1" height="2"/><rect x="648.28" y="18.5" width="1" height="4"/><rect x="654.05" y="20.5" width="1" height="2"/><rect x="659.81" y="18.5" width="1" height="4"/><rect x="665.57" y="20.5" width="1" height="2"/><rect x="671.33" y="18.5" width="1" height="4"/><rect x="677.09" y="20.5" width="1" height="2"/><rect x="682.86" y="18.5" width="1" height="4"/><rect x="688.62" y="20.5" width="1" height="2"/><rect x="694.38" y="14.0" width="1" height="8.5"/><rect x="700.14" y="20.5" width="1" height="2"/><rect x="705.90" y="18.5" width="1" height="4"/><rect x="711.67" y="20.5" width="1" height="2"/><rect x="717.43" y="18.5" width="1" height="4"/><rect x="723.19" y="20.5" width="1" height="2"/><rect x="728.95" y="18.5" width="1" height="4"/><rect x="734.71" y="20.5" width="1" height="2"/><rect x="740.48" y="18.5" width="1" height="4"/><rect x="746.24" y="20.5" width="1" height="2"/><rect x="752.00" y="14.0" width="1" height="8.5"/><rect x="757.76" y="20.5" width="1" height="2"/><rect x="763.52" y="18.5" width="1" height="4"/><rect x="769.29" y="20.5" width="1" height="2"/><rect x="775.05" y="18.5" width="1" height="4"/><rect x="780.81" y="20.5" width="1" height="2"/><rect x="786.57" y="18.5" width="1" height="4"/><rect x="792.33" y="20.5" width="1" height="2"/><rect x="798.10" y="18.5" width="1" height="4"/><rect x="803.86" y="20.5" width="1" height="2"/><rect x="809.62" y="14.0" width="1" height="8.5"/><rect x="815.38" y="20.5" width="1" height="2"/><rect x="821.14" y="18.5" width="1" height="4"/><rect x="826.91" y="20.5" width="1" height="2"/><rect x="832.67" y="18.5" width="1" height="4"/><rect x="838.43" y="20.5" width="1" height="2"/><rect x="844.19" y="18.5" width="1" height="4"/><rect x="849.95" y="20.5" width="1" height="2"/><rect x="855.72" y="18.5" width="1" height="4"/><rect x="861.48" y="20.5" width="1" height="2"/><rect x="867.24" y="14.0" width="1" height="8.5"/><rect x="873.00" y="20.5" width="1" height="2"/></g></svg>
<div id="rh-200" class="t" style="left:399.55999999999995px;transform:translateX(-50%);top:160.70px;height:15px;line-height:15px;font-size:10.5px;color:#c0c0c0;font-weight:400;-webkit-text-stroke:0.25px currentColor;">-200</div>
<div id="rh-100" class="t" style="left:457.17999999999995px;transform:translateX(-50%);top:160.70px;height:15px;line-height:15px;font-size:10.5px;color:#c0c0c0;font-weight:400;-webkit-text-stroke:0.25px currentColor;">-100</div>
<div id="rh0" class="t" style="left:516.3px;transform:translateX(-50%);top:160.70px;height:15px;line-height:15px;font-size:10.5px;color:#c0c0c0;font-weight:400;-webkit-text-stroke:0.25px currentColor;">0</div>
<div id="rh100" class="t" style="left:573.92px;transform:translateX(-50%);top:160.70px;height:15px;line-height:15px;font-size:10.5px;color:#c0c0c0;font-weight:400;-webkit-text-stroke:0.25px currentColor;">100</div>
<div id="rh200" class="t" style="left:631.54px;transform:translateX(-50%);top:160.70px;height:15px;line-height:15px;font-size:10.5px;color:#c0c0c0;font-weight:400;-webkit-text-stroke:0.25px currentColor;">200</div>
<div id="rh300" class="t" style="left:689.16px;transform:translateX(-50%);top:160.70px;height:15px;line-height:15px;font-size:10.5px;color:#c0c0c0;font-weight:400;-webkit-text-stroke:0.25px currentColor;">300</div>
<div id="rh400" class="t" style="left:746.78px;transform:translateX(-50%);top:160.70px;height:15px;line-height:15px;font-size:10.5px;color:#c0c0c0;font-weight:400;-webkit-text-stroke:0.25px currentColor;">400</div>
<div id="rh500" class="t" style="left:804.4px;transform:translateX(-50%);top:160.70px;height:15px;line-height:15px;font-size:10.5px;color:#c0c0c0;font-weight:400;-webkit-text-stroke:0.25px currentColor;">500</div>
<div id="rh600" class="t" style="left:862.02px;transform:translateX(-50%);top:160.70px;height:15px;line-height:15px;font-size:10.5px;color:#c0c0c0;font-weight:400;-webkit-text-stroke:0.25px currentColor;">600</div>
<div id="rh700" class="t" style="left:919.64px;transform:translateX(-50%);top:160.70px;height:15px;line-height:15px;font-size:10.5px;color:#c0c0c0;font-weight:400;-webkit-text-stroke:0.25px currentColor;">700</div>
<div id="rh800" class="t" style="left:977.26px;transform:translateX(-50%);top:160.70px;height:15px;line-height:15px;font-size:10.5px;color:#c0c0c0;font-weight:400;-webkit-text-stroke:0.25px currentColor;">800</div>
<div id="rh900" class="t" style="left:1034.88px;transform:translateX(-50%);top:160.70px;height:15px;line-height:15px;font-size:10.5px;color:#c0c0c0;font-weight:400;-webkit-text-stroke:0.25px currentColor;">900</div>
<div id="rh1000" class="t" style="left:1092.5px;transform:translateX(-50%);top:160.70px;height:15px;line-height:15px;font-size:10.5px;color:#c0c0c0;font-weight:400;-webkit-text-stroke:0.25px currentColor;">1000</div>
<div id="rh1100" class="t" style="left:1150.12px;transform:translateX(-50%);top:160.70px;height:15px;line-height:15px;font-size:10.5px;color:#c0c0c0;font-weight:400;-webkit-text-stroke:0.25px currentColor;">1100</div>
<div id="rh1200" class="t" style="left:1207.74px;transform:translateX(-50%);top:160.70px;height:15px;line-height:15px;font-size:10.5px;color:#c0c0c0;font-weight:400;-webkit-text-stroke:0.25px currentColor;">1200</div>
<div class="b" style="left:1164px;top:159.5px;width:2px;height:23px;background:#b4b4b4;"></div>
<svg class="b" style="left:340px;top:160px;" width="22.5" height="818" viewBox="0 0 22.5 818"><g fill="#c4c4c4"><rect y="28.58" x="18.5" height="1" width="4"/><rect y="34.35" x="20.5" height="1" width="2"/><rect y="40.11" x="18.5" height="1" width="4"/><rect y="45.87" x="20.5" height="1" width="2"/><rect y="51.63" x="18.5" height="1" width="4"/><rect y="57.39" x="20.5" height="1" width="2"/><rect y="63.16" x="18.5" height="1" width="4"/><rect y="68.92" x="20.5" height="1" width="2"/><rect y="74.68" x="14.0" height="1" width="8.5"/><rect y="80.44" x="20.5" height="1" width="2"/><rect y="86.20" x="18.5" height="1" width="4"/><rect y="91.97" x="20.5" height="1" width="2"/><rect y="97.73" x="18.5" height="1" width="4"/><rect y="103.49" x="20.5" height="1" width="2"/><rect y="109.25" x="18.5" height="1" width="4"/><rect y="115.01" x="20.5" height="1" width="2"/><rect y="120.78" x="18.5" height="1" width="4"/><rect y="126.54" x="20.5" height="1" width="2"/><rect y="132.30" x="14.0" height="1" width="8.5"/><rect y="138.06" x="20.5" height="1" width="2"/><rect y="143.82" x="18.5" height="1" width="4"/><rect y="149.59" x="20.5" height="1" width="2"/><rect y="155.35" x="18.5" height="1" width="4"/><rect y="161.11" x="20.5" height="1" width="2"/><rect y="166.87" x="18.5" height="1" width="4"/><rect y="172.63" x="20.5" height="1" width="2"/><rect y="178.40" x="18.5" height="1" width="4"/><rect y="184.16" x="20.5" height="1" width="2"/><rect y="189.92" x="14.0" height="1" width="8.5"/><rect y="195.68" x="20.5" height="1" width="2"/><rect y="201.44" x="18.5" height="1" width="4"/><rect y="207.21" x="20.5" height="1" width="2"/><rect y="212.97" x="18.5" height="1" width="4"/><rect y="218.73" x="20.5" height="1" width="2"/><rect y="224.49" x="18.5" height="1" width="4"/><rect y="230.25" x="20.5" height="1" width="2"/><rect y="236.02" x="18.5" height="1" width="4"/><rect y="241.78" x="20.5" height="1" width="2"/><rect y="247.54" x="14.0" height="1" width="8.5"/><rect y="253.30" x="20.5" height="1" width="2"/><rect y="259.06" x="18.5" height="1" width="4"/><rect y="264.83" x="20.5" height="1" width="2"/><rect y="270.59" x="18.5" height="1" width="4"/><rect y="276.35" x="20.5" height="1" width="2"/><rect y="282.11" x="18.5" height="1" width="4"/><rect y="287.87" x="20.5" height="1" width="2"/><rect y="293.64" x="18.5" height="1" width="4"/><rect y="299.40" x="20.5" height="1" width="2"/><rect y="305.16" x="14.0" height="1" width="8.5"/><rect y="310.92" x="20.5" height="1" width="2"/><rect y="316.68" x="18.5" height="1" width="4"/><rect y="322.45" x="20.5" height="1" width="2"/><rect y="328.21" x="18.5" height="1" width="4"/><rect y="333.97" x="20.5" height="1" width="2"/><rect y="339.73" x="18.5" height="1" width="4"/><rect y="345.49" x="20.5" height="1" width="2"/><rect y="351.26" x="18.5" height="1" width="4"/><rect y="357.02" x="20.5" height="1" width="2"/><rect y="362.78" x="14.0" height="1" width="8.5"/><rect y="368.54" x="20.5" height="1" width="2"/><rect y="374.30" x="18.5" height="1" width="4"/><rect y="380.07" x="20.5" height="1" width="2"/><rect y="385.83" x="18.5" height="1" width="4"/><rect y="391.59" x="20.5" height="1" width="2"/><rect y="397.35" x="18.5" height="1" width="4"/><rect y="403.11" x="20.5" height="1" width="2"/><rect y="408.88" x="18.5" height="1" width="4"/><rect y="414.64" x="20.5" height="1" width="2"/><rect y="420.40" x="14.0" height="1" width="8.5"/><rect y="426.16" x="20.5" height="1" width="2"/><rect y="431.92" x="18.5" height="1" width="4"/><rect y="437.69" x="20.5" height="1" width="2"/><rect y="443.45" x="18.5" height="1" width="4"/><rect y="449.21" x="20.5" height="1" width="2"/><rect y="454.97" x="18.5" height="1" width="4"/><rect y="460.73" x="20.5" height="1" width="2"/><rect y="466.50" x="18.5" height="1" width="4"/><rect y="472.26" x="20.5" height="1" width="2"/><rect y="478.02" x="14.0" height="1" width="8.5"/><rect y="483.78" x="20.5" height="1" width="2"/><rect y="489.54" x="18.5" height="1" width="4"/><rect y="495.31" x="20.5" height="1" width="2"/><rect y="501.07" x="18.5" height="1" width="4"/><rect y="506.83" x="20.5" height="1" width="2"/><rect y="512.59" x="18.5" height="1" width="4"/><rect y="518.35" x="20.5" height="1" width="2"/><rect y="524.12" x="18.5" height="1" width="4"/><rect y="529.88" x="20.5" height="1" width="2"/><rect y="535.64" x="14.0" height="1" width="8.5"/><rect y="541.40" x="20.5" height="1" width="2"/><rect y="547.16" x="18.5" height="1" width="4"/><rect y="552.93" x="20.5" height="1" width="2"/><rect y="558.69" x="18.5" height="1" width="4"/><rect y="564.45" x="20.5" height="1" width="2"/><rect y="570.21" x="18.5" height="1" width="4"/><rect y="575.97" x="20.5" height="1" width="2"/><rect y="581.74" x="18.5" height="1" width="4"/><rect y="587.50" x="20.5" height="1" width="2"/><rect y="593.26" x="14.0" height="1" width="8.5"/><rect y="599.02" x="20.5" height="1" width="2"/><rect y="604.78" x="18.5" height="1" width="4"/><rect y="610.55" x="20.5" height="1" width="2"/><rect y="616.31" x="18.5" height="1" width="4"/><rect y="622.07" x="20.5" height="1" width="2"/><rect y="627.83" x="18.5" height="1" width="4"/><rect y="633.59" x="20.5" height="1" width="2"/><rect y="639.36" x="18.5" height="1" width="4"/><rect y="645.12" x="20.5" height="1" width="2"/><rect y="650.88" x="14.0" height="1" width="8.5"/><rect y="656.64" x="20.5" height="1" width="2"/><rect y="662.40" x="18.5" height="1" width="4"/><rect y="668.17" x="20.5" height="1" width="2"/><rect y="673.93" x="18.5" height="1" width="4"/><rect y="679.69" x="20.5" height="1" width="2"/><rect y="685.45" x="18.5" height="1" width="4"/><rect y="691.21" x="20.5" height="1" width="2"/><rect y="696.98" x="18.5" height="1" width="4"/><rect y="702.74" x="20.5" height="1" width="2"/><rect y="708.50" x="14.0" height="1" width="8.5"/><rect y="714.26" x="20.5" height="1" width="2"/><rect y="720.02" x="18.5" height="1" width="4"/><rect y="725.79" x="20.5" height="1" width="2"/><rect y="731.55" x="18.5" height="1" width="4"/><rect y="737.31" x="20.5" height="1" width="2"/><rect y="743.07" x="18.5" height="1" width="4"/><rect y="748.83" x="20.5" height="1" width="2"/><rect y="754.60" x="18.5" height="1" width="4"/><rect y="760.36" x="20.5" height="1" width="2"/><rect y="766.12" x="14.0" height="1" width="8.5"/><rect y="771.88" x="20.5" height="1" width="2"/><rect y="777.64" x="18.5" height="1" width="4"/><rect y="783.41" x="20.5" height="1" width="2"/><rect y="789.17" x="18.5" height="1" width="4"/><rect y="794.93" x="20.5" height="1" width="2"/><rect y="800.69" x="18.5" height="1" width="4"/><rect y="806.45" x="20.5" height="1" width="2"/><rect y="812.22" x="18.5" height="1" width="4"/></g></svg>
<div class="t" style="left:347.5px;top:235.2px;font-size:10.5px;color:#c0c0c0;height:12px;line-height:12px;transform:translate(-50%,-50%) rotate(-90deg);">-100</div>
<div class="t" style="left:347.5px;top:292.8px;font-size:10.5px;color:#c0c0c0;height:12px;line-height:12px;transform:translate(-50%,-50%) rotate(-90deg);">0</div>
<div class="t" style="left:347.5px;top:350.4px;font-size:10.5px;color:#c0c0c0;height:12px;line-height:12px;transform:translate(-50%,-50%) rotate(-90deg);">100</div>
<div class="t" style="left:347.5px;top:408.0px;font-size:10.5px;color:#c0c0c0;height:12px;line-height:12px;transform:translate(-50%,-50%) rotate(-90deg);">200</div>
<div class="t" style="left:347.5px;top:465.7px;font-size:10.5px;color:#c0c0c0;height:12px;line-height:12px;transform:translate(-50%,-50%) rotate(-90deg);">300</div>
<div class="t" style="left:347.5px;top:523.3px;font-size:10.5px;color:#c0c0c0;height:12px;line-height:12px;transform:translate(-50%,-50%) rotate(-90deg);">400</div>
<div class="t" style="left:347.5px;top:580.9px;font-size:10.5px;color:#c0c0c0;height:12px;line-height:12px;transform:translate(-50%,-50%) rotate(-90deg);">500</div>
<div class="t" style="left:347.5px;top:638.5px;font-size:10.5px;color:#c0c0c0;height:12px;line-height:12px;transform:translate(-50%,-50%) rotate(-90deg);">600</div>
<div class="t" style="left:347.5px;top:696.1px;font-size:10.5px;color:#c0c0c0;height:12px;line-height:12px;transform:translate(-50%,-50%) rotate(-90deg);">700</div>
<div class="t" style="left:347.5px;top:753.8px;font-size:10.5px;color:#c0c0c0;height:12px;line-height:12px;transform:translate(-50%,-50%) rotate(-90deg);">800</div>
<div class="t" style="left:347.5px;top:811.4px;font-size:10.5px;color:#c0c0c0;height:12px;line-height:12px;transform:translate(-50%,-50%) rotate(-90deg);">900</div>
<div class="t" style="left:347.5px;top:869.0px;font-size:10.5px;color:#c0c0c0;height:12px;line-height:12px;transform:translate(-50%,-50%) rotate(-90deg);">1000</div>
<div class="t" style="left:347.5px;top:926.6px;font-size:10.5px;color:#c0c0c0;height:12px;line-height:12px;transform:translate(-50%,-50%) rotate(-90deg);">1100</div>
<div class="b" style="left:340px;top:543.3px;width:22.5px;height:2px;background:#b4b4b4;"></div>
<div class="b" style="left:362.5px;top:182.5px;width:855.5px;height:795.5px;background:#222;"></div>
<div class="b" style="left:515.2px;top:291.7px;width:590px;height:590px;background:#fff;box-shadow:0 0 0 1px #0a0a0a;background:conic-gradient(#e6e6e6 25%,#fff 0 50%,#e6e6e6 0 75%,#fff 0) 2.500px 2.300px/8.850px 8.850px;"></div>
<svg class="b" style="left:500px;top:280px;" width="620" height="620" viewBox="500 280 620 620"><defs><filter id="blur" x="-10%" y="-20%" width="120%" height="140%"><feGaussianBlur stdDeviation="1.500"/></filter><filter id="blur2" x="-10%" y="-20%" width="120%" height="140%"><feGaussianBlur stdDeviation="0.800"/></filter><linearGradient id="hil" x1="0" y1="0" x2="0.350" y2="1"><stop offset="0" stop-color="#a0a0a0"/><stop offset="0.300" stop-color="#8c8c8c" stop-opacity=".9"/><stop offset="0.750" stop-color="#777" stop-opacity="0"/></linearGradient><linearGradient id="edge" x1="0" y1="0" x2="0.350" y2="1"><stop offset="0" stop-color="#444" stop-opacity="0"/><stop offset="0.500" stop-color="#444" stop-opacity="0"/><stop offset="1" stop-color="#444"/></linearGradient></defs><rect x="538.4" y="431.6" width="314.0" height="118.0" rx="27.5" fill="#2c2c2c" filter="url(#blur)" opacity=".9"/><rect x="546.65" y="439.85" width="299.50" height="103.50" rx="20.85" fill="#9bc9bf" stroke="#575757" stroke-width="13.3"/><rect x="540.4" y="433.6" width="312.0" height="116.0" rx="27.1" fill="none" stroke="url(#edge)" stroke-width="1.200"/><rect x="542.6" y="435.8" width="307.6" height="111.6" rx="24.9" fill="none" stroke="url(#hil)" stroke-width="2.300" filter="url(#blur2)"/><rect x="595.4" y="578.9" width="314.0" height="118.0" rx="27.5" fill="#2c2c2c" filter="url(#blur)" opacity=".9"/><rect x="603.65" y="587.15" width="299.50" height="103.50" rx="20.85" fill="#cccccc" stroke="#575757" stroke-width="13.3"/><rect x="597.4" y="580.9" width="312.0" height="116.0" rx="27.1" fill="none" stroke="url(#edge)" stroke-width="1.200"/><rect x="599.6" y="583.1" width="307.6" height="111.6" rx="24.9" fill="none" stroke="url(#hil)" stroke-width="2.300" filter="url(#blur2)"/><rect x="647.2" y="723.6" width="314.0" height="118.0" rx="27.5" fill="#2c2c2c" filter="url(#blur)" opacity=".9"/><rect x="655.45" y="731.85" width="299.50" height="103.50" rx="20.85" fill="#cda27e" stroke="#575757" stroke-width="13.3"/><rect x="649.2" y="725.6" width="312.0" height="116.0" rx="27.1" fill="none" stroke="url(#edge)" stroke-width="1.200"/><rect x="651.4" y="727.8" width="307.6" height="111.6" rx="24.9" fill="none" stroke="url(#hil)" stroke-width="2.300" filter="url(#blur2)"/><circle cx="979" cy="417.500" r="71.400" fill="none" stroke="#fff" stroke-width="48"/><circle cx="979" cy="417.500" r="95.300" fill="none" stroke="#555555" stroke-width="13.500"/><circle cx="979" cy="417.500" r="47.500" fill="none" stroke="#555555" stroke-width="13.500"/><path d="M696 491.3 L753.6 638.2 L804.8 783.6" fill="none" stroke="#555555" stroke-width="35" stroke-linecap="round" stroke-linejoin="round"/><circle cx="696" cy="491.3" r="32.600" fill="#555555"/><circle cx="753.6" cy="638.2" r="32.600" fill="#555555"/><circle cx="804.8" cy="783.6" r="32.600" fill="#555555"/><path d="M696 491.3 L753.6 638.2 L804.8 783.6" fill="none" stroke="#fff" stroke-width="21" stroke-linecap="round" stroke-linejoin="round"/><circle cx="696" cy="491.3" r="25.500" fill="#fff"/><circle cx="753.6" cy="638.2" r="25.500" fill="#fff"/><circle cx="804.8" cy="783.6" r="25.500" fill="#fff"/><path d="M956 481.500 C 994 517 1000 585 963.500 638 L 1002.500 675 L 833 717 L 865.500 549 L 918.500 595.500 C 936 568 951 522 956 481.500 Z" fill="#ff4d84" stroke="#555555" stroke-width="13.500" stroke-linejoin="round"/></svg>
<div class="b" style="left:1218.5px;top:136px;width:2.5px;height:47px;background:#1e1e1e;"></div>
<div class="b" style="left:1218.5px;top:183px;width:2.5px;height:795px;background:#272727;"></div>
<div class="b" style="left:1221px;top:137px;width:379px;height:23px;background:#262626;"></div>
<div class="b" style="left:1228.7px;top:143.5px;width:1.3px;height:9px;background:#4a4a4a;"></div><div class="b" style="left:1231.7px;top:143.5px;width:1.3px;height:9px;background:#4a4a4a;"></div>
<div class="b" style="left:1241.5px;top:138px;width:61.5px;height:22px;background:#383838;border-radius:2px 2px 0 0;"></div>
<div id="p_tr" class="t" style="left:1245.5px;top:140.60px;height:17px;line-height:17px;font-size:12px;color:#f2f2f2;font-weight:400;letter-spacing:0.033px;-webkit-text-stroke:0.600px currentColor;">Transform</div>
<div class="b" style="left:1221px;top:160px;width:379px;height:112px;background:#383838;box-shadow:inset 0 1px 0 #1e1e1e;"></div>
<svg class="b" style="left:1240.5px;top:183px;" width="42.5" height="42.5" viewBox="0 0 42.5 42.5"><rect x="2.500" y="2.500" width="37" height="37" fill="#5a5a5a"/><rect x="0.0" y="0.0" width="5.500" height="5.500" fill="#5f5f5f"/><rect x="0.0" y="18.5" width="5.500" height="5.500" fill="#5f5f5f"/><rect x="0.0" y="37.0" width="5.500" height="5.500" fill="#5f5f5f"/><rect x="18.5" y="0.0" width="5.500" height="5.500" fill="#5f5f5f"/><rect x="18.5" y="18.5" width="5.500" height="5.500" fill="#5f5f5f"/><rect x="18.5" y="37.0" width="5.500" height="5.500" fill="#5f5f5f"/><rect x="37.0" y="0.0" width="5.500" height="5.500" fill="#5f5f5f"/><rect x="37.0" y="18.5" width="5.500" height="5.500" fill="#5f5f5f"/><rect x="37.0" y="37.0" width="5.500" height="5.500" fill="#5f5f5f"/></svg>
<div id="t86" class="t" style="right:285px;top:175.70px;height:17px;line-height:17px;font-size:12px;color:#ececec;font-weight:400;-webkit-text-stroke:0.600px currentColor;">X:</div>
<div class="b" style="left:1318px;top:172.0px;width:66.5px;height:20.5px;background:#2b2b2b;border:1px solid #1d1d1d;border-radius:3px;box-shadow:0 1px 0 rgba(255,255,255,.07);"></div>
<div id="trX" class="t" style="left:1321.7px;top:175.20px;height:17px;line-height:17px;font-size:12px;color:#8a8a8a;font-weight:400;letter-spacing:0.104px;-webkit-text-stroke:0.25px currentColor;">0 px</div>
<div id="t88" class="t" style="right:192px;top:175.70px;height:17px;line-height:17px;font-size:12px;color:#ececec;font-weight:400;-webkit-text-stroke:0.600px currentColor;">W:</div>
<div class="b" style="left:1411.5px;top:172.0px;width:66.5px;height:20.5px;background:#2b2b2b;border:1px solid #1d1d1d;border-radius:3px;box-shadow:0 1px 0 rgba(255,255,255,.07);"></div>
<div id="trW" class="t" style="left:1415.2px;top:175.20px;height:17px;line-height:17px;font-size:12px;color:#8a8a8a;font-weight:400;letter-spacing:0.104px;-webkit-text-stroke:0.25px currentColor;">0 px</div>
<div id="t90" class="t" style="right:285px;top:200.20px;height:17px;line-height:17px;font-size:12px;color:#ececec;font-weight:400;-webkit-text-stroke:0.600px currentColor;">Y:</div>
<div class="b" style="left:1318px;top:196.5px;width:66.5px;height:20.5px;background:#2b2b2b;border:1px solid #1d1d1d;border-radius:3px;box-shadow:0 1px 0 rgba(255,255,255,.07);"></div>
<div id="trY" class="t" style="left:1321.7px;top:199.70px;height:17px;line-height:17px;font-size:12px;color:#8a8a8a;font-weight:400;letter-spacing:0.104px;-webkit-text-stroke:0.25px currentColor;">0 px</div>
<div id="t92" class="t" style="right:192px;top:200.20px;height:17px;line-height:17px;font-size:12px;color:#ececec;font-weight:400;-webkit-text-stroke:0.600px currentColor;">H:</div>
<div class="b" style="left:1411.5px;top:196.5px;width:66.5px;height:20.5px;background:#2b2b2b;border:1px solid #1d1d1d;border-radius:3px;box-shadow:0 1px 0 rgba(255,255,255,.07);"></div>
<div id="trH" class="t" style="left:1415.2px;top:199.70px;height:17px;line-height:17px;font-size:12px;color:#8a8a8a;font-weight:400;letter-spacing:0.104px;-webkit-text-stroke:0.25px currentColor;">0 px</div>
<div id="t94" class="t" style="right:285px;top:235.20px;height:17px;line-height:17px;font-size:12px;color:#ececec;font-weight:400;-webkit-text-stroke:0.600px currentColor;">R:</div>
<div class="b" style="left:1318px;top:232.0px;width:66.5px;height:20.5px;background:#2b2b2b;border:1px solid #1d1d1d;border-radius:3px;box-shadow:0 1px 0 rgba(255,255,255,.07);"></div>
<div id="trR" class="t" style="left:1321.7px;top:235.00px;height:17px;line-height:17px;font-size:12px;color:#8a8a8a;font-weight:400;letter-spacing:0.344px;-webkit-text-stroke:0.25px currentColor;">0 °</div>
<svg class="b" style="left:1373.7px;top:240.0px;" width="6.5" height="5.5" viewBox="0 0 6.5 5.5"><path d="M0 0h6.5L3.25 5.5z" fill="#9a9a9a"/></svg>
<div id="t96" class="t" style="right:192px;top:235.20px;height:17px;line-height:17px;font-size:12px;color:#ececec;font-weight:400;-webkit-text-stroke:0.600px currentColor;">S:</div>
<div class="b" style="left:1411.5px;top:232.0px;width:66.5px;height:20.5px;background:#2b2b2b;border:1px solid #1d1d1d;border-radius:3px;box-shadow:0 1px 0 rgba(255,255,255,.07);"></div>
<div id="trS" class="t" style="left:1415.2px;top:235.00px;height:17px;line-height:17px;font-size:12px;color:#8a8a8a;font-weight:400;letter-spacing:0.344px;-webkit-text-stroke:0.25px currentColor;">0 °</div>
<svg class="b" style="left:1467.2px;top:240.0px;" width="6.5" height="5.5" viewBox="0 0 6.5 5.5"><path d="M0 0h6.5L3.25 5.5z" fill="#9a9a9a"/></svg>
<svg class="b" style="left:1488.5px;top:186px;" width="7" height="17" viewBox="0 0 7 17"><g fill="none" stroke="#8a8a8a" stroke-width="1.300"><rect x="1.500" y="0.800" width="4" height="6.500" rx="2"/><rect x="1.500" y="9.700" width="4" height="6.500" rx="2"/><path d="M3.500 5.500v6"/></g></svg>
<div class="b" style="left:1221px;top:272px;width:379px;height:2px;background:#2b2b2b;"></div>
<div class="b" style="left:1221px;top:274px;width:379px;height:24px;background:#262626;"></div>
<div class="b" style="left:1228.7px;top:281.5px;width:1.3px;height:9px;background:#4a4a4a;"></div><div class="b" style="left:1231.7px;top:281.5px;width:1.3px;height:9px;background:#4a4a4a;"></div>
<div class="b" style="left:1303px;top:275.5px;width:54px;height:22.5px;background:#383838;border-radius:2px 2px 0 0;"></div>
<div id="p_sw" class="t" style="left:1245.5px;top:278.40px;height:17px;line-height:17px;font-size:12px;color:#8c8c8c;font-weight:400;letter-spacing:-0.147px;-webkit-text-stroke:0.25px currentColor;">Swatches</div>
<div id="p_sym" class="t" style="left:1306.7px;top:278.40px;height:17px;line-height:17px;font-size:12px;color:#f2f2f2;font-weight:400;letter-spacing:-0.086px;-webkit-text-stroke:0.600px currentColor;">Symbols</div>
<div id="p_str" class="t" style="left:1362.2px;top:278.40px;height:17px;line-height:17px;font-size:12px;color:#8c8c8c;font-weight:400;letter-spacing:-0.138px;-webkit-text-stroke:0.25px currentColor;">Stroke</div>
<div id="p_br" class="t" style="left:1406.5px;top:278.40px;height:17px;line-height:17px;font-size:12px;color:#8c8c8c;font-weight:400;letter-spacing:-0.122px;-webkit-text-stroke:0.25px currentColor;">Brushes</div>
<div class="b" style="left:1401.5px;top:280.5px;width:1px;height:11px;background:#4a4a4a;"></div>
<div class="b" style="left:1221px;top:298px;width:379px;height:32.5px;background:linear-gradient(#3d3d3d,#444);border-bottom:1px solid #222;"></div>
<div class="b" style="left:1227px;top:302px;width:96px;height:23px;background:#373737;border-radius:3px;border:1px solid #1d1d1d;box-shadow:inset 0 1px 0 #4a4a4a,0 1px 0 rgba(255,255,255,.06);"></div>
<svg class="b" style="left:1233.5px;top:304px;" width="20" height="20" viewBox="0 0 20 20"><circle cx="10" cy="10" r="8" fill="none" stroke="#f07a18" stroke-width="2"/><g transform="translate(10,10)" fill="none" stroke="#f07a18" stroke-width="1.500" stroke-linecap="round"><path d="M0 0.300C-0.500 -2.500 -2 -4.500 -4.500 -5.500"/><path d="M0 0.300C2.500 1.200 5 0.800 7 -1"/><path d="M0 0.300C-1.800 2.300 -2.500 4.800 -2 7"/></g></svg>
<div id="b_create" class="t" style="left:1268.8px;top:306.20px;height:17px;line-height:17px;font-size:12px;color:#ececec;font-weight:400;letter-spacing:-0.106px;-webkit-text-stroke:0.25px currentColor;">Create</div>
<div class="b" style="left:1334.5px;top:302px;width:97.5px;height:23px;background:#373737;border-radius:3px;border:1px solid #1d1d1d;box-shadow:inset 0 1px 0 #4a4a4a,0 1px 0 rgba(255,255,255,.06);"></div>
<svg class="b" style="left:1341px;top:304px;" width="20" height="20" viewBox="0 0 20 20"><circle cx="10" cy="10" r="8" fill="none" stroke="#f07a18" stroke-width="2" stroke-dasharray="9.500 3.060" stroke-dashoffset="3"/><g transform="translate(10,10)" fill="none" stroke="#f07a18" stroke-width="1.500" stroke-linecap="round"><path d="M0 0.300C-0.500 -2.500 -2 -4.500 -4.500 -5.500"/><path d="M0 0.300C2.500 1.200 5 0.800 7 -1"/><path d="M0 0.300C-1.800 2.300 -2.500 4.800 -2 7"/></g></svg>
<div id="b_detach" class="t" style="left:1375.5px;top:306.20px;height:17px;line-height:17px;font-size:12px;color:#ececec;font-weight:400;letter-spacing:-0.006px;-webkit-text-stroke:0.25px currentColor;">Detach</div>
<div id="b_sync" class="t" style="left:1532px;top:305.20px;height:17px;line-height:17px;font-size:12px;color:#ececec;font-weight:400;letter-spacing:-0.004px;-webkit-text-stroke:0.25px currentColor;">Sync:</div>
<div class="b" style="left:1567.5px;top:299.5px;width:29px;height:29px;background:#2b2b2b;"></div>
<svg class="b" style="left:1571.5px;top:304px;" width="20" height="20" viewBox="0 0 20 20"><circle cx="10" cy="10" r="6.500" fill="none" stroke="#f07a18" stroke-width="1.600"/><path d="M1 1h3.800l-3.800 3.800zM19 1h-3.800l3.800 3.800zM1 19h3.800l-3.800-3.800zM19 19h-3.800l3.800-3.800z" fill="#f07a18"/><circle cx="10" cy="10" r="9" fill="none" stroke="#f07a18" stroke-width="1.300" stroke-dasharray="7 7.140" stroke-dashoffset="-3.600"/><g transform="translate(10,10) scale(.78)" fill="none" stroke="#f07a18" stroke-width="1.500" stroke-linecap="round"><path d="M0 0.300C-0.500 -2.500 -2 -4.500 -4.500 -5.500"/><path d="M0 0.300C2.500 1.200 5 0.800 7 -1"/><path d="M0 0.300C-1.800 2.300 -2.500 4.800 -2 7"/></g></svg>
<div class="b" style="left:1221px;top:330.5px;width:379px;height:218px;background:#383838;"></div>
<div class="b" style="left:1221px;top:548.5px;width:379px;height:2.5px;background:#2b2b2b;"></div>
<div class="b" style="left:1221px;top:551px;width:379px;height:23.5px;background:#262626;"></div>
<div class="b" style="left:1228.7px;top:558px;width:1.3px;height:9px;background:#4a4a4a;"></div><div class="b" style="left:1231.7px;top:558px;width:1.3px;height:9px;background:#4a4a4a;"></div>
<div class="b" style="left:1241.5px;top:552px;width:42.5px;height:22.5px;background:#383838;border-radius:2px 2px 0 0;"></div>
<div id="p_lay" class="t" style="left:1245.5px;top:555.00px;height:17px;line-height:17px;font-size:12px;color:#f2f2f2;font-weight:400;letter-spacing:-0.206px;-webkit-text-stroke:0.600px currentColor;">Layers</div>
<div id="p_his" class="t" style="left:1290px;top:555.00px;height:17px;line-height:17px;font-size:12px;color:#8c8c8c;font-weight:400;letter-spacing:0.109px;-webkit-text-stroke:0.25px currentColor;">History</div>
<div id="p_nav" class="t" style="left:1337.5px;top:555.00px;height:17px;line-height:17px;font-size:12px;color:#8c8c8c;font-weight:400;letter-spacing:0.018px;-webkit-text-stroke:0.25px currentColor;">Navigator</div>
<div class="b" style="left:1333px;top:557px;width:1px;height:11px;background:#4a4a4a;"></div>
<svg class="b" style="left:1581.5px;top:557px;" width="16" height="11" viewBox="0 0 16 11"><rect x="0" y="0.0" width="9.500" height="1.100" fill="#d0d0d0"/><rect x="0" y="2.3" width="9.500" height="1.100" fill="#d0d0d0"/><rect x="0" y="4.6" width="9.500" height="1.100" fill="#d0d0d0"/><rect x="0" y="6.9" width="9.500" height="1.100" fill="#d0d0d0"/><path d="M11 7h4.200l-2.100 3z" fill="#e8e8e8"/></svg>
<div class="b" style="left:1221px;top:574.5px;width:379px;height:33px;background:linear-gradient(#3d3d3d,#444);border-bottom:1px solid #222;"></div>
<div id="l_op" class="t" style="left:1226.7px;top:582.70px;height:17px;line-height:17px;font-size:12px;color:#ececec;font-weight:400;letter-spacing:0.141px;-webkit-text-stroke:0.25px currentColor;">Opacity:</div>
<div class="b" style="left:1288px;top:580.5px;width:54px;height:21px;background:#2b2b2b;border:1px solid #1d1d1d;border-radius:3px;box-shadow:0 1px 0 rgba(255,255,255,.07);"></div>
<div id="l_100" class="t" style="left:1291.7px;top:584.70px;height:16px;line-height:16px;font-size:11.5px;color:#8a8a8a;font-weight:400;letter-spacing:-0.277px;-webkit-text-stroke:0.25px currentColor;">100 %</div>
<svg class="b" style="left:1331.2px;top:589.5px;" width="6.5" height="5.5" viewBox="0 0 6.5 5.5"><path d="M0 0h6.5L3.25 5.5z" fill="#9a9a9a"/></svg>
<div class="b" style="left:1345px;top:580.5px;width:205.5px;height:21px;background:#343434;border:1px solid #1d1d1d;border-radius:3px;box-shadow:0 1px 0 rgba(255,255,255,.07);"></div>
<div id="l_norm" class="t" style="left:1350px;top:584.20px;height:17px;line-height:17px;font-size:12px;color:#8a8a8a;font-weight:400;letter-spacing:-0.034px;-webkit-text-stroke:0.25px currentColor;">Normal</div>
<svg class="b" style="left:1537px;top:587px;" width="5" height="10" viewBox="0 0 5 10"><path d="M0 3.500L2.500 0.500 5 3.500zM0 6.500L2.500 9.500 5 6.500z" fill="#9a9a9a"/></svg>
<svg class="b" style="left:1554.5px;top:584px;" width="15" height="15" viewBox="0 0 15 15"><g transform="translate(7.500,7.500)" fill="#cfcfcf"><rect x="-1.500" y="-7" width="3" height="3.500" transform="rotate(0)"/><rect x="-1.500" y="-7" width="3" height="3.500" transform="rotate(45)"/><rect x="-1.500" y="-7" width="3" height="3.500" transform="rotate(90)"/><rect x="-1.500" y="-7" width="3" height="3.500" transform="rotate(135)"/><rect x="-1.500" y="-7" width="3" height="3.500" transform="rotate(180)"/><rect x="-1.500" y="-7" width="3" height="3.500" transform="rotate(225)"/><rect x="-1.500" y="-7" width="3" height="3.500" transform="rotate(270)"/><rect x="-1.500" y="-7" width="3" height="3.500" transform="rotate(315)"/><circle r="5"/><circle r="2.200" fill="#404040"/></g></svg>
<svg class="b" style="left:1578px;top:583.5px;" width="11" height="15" viewBox="0 0 11 15"><path d="M2.500 7V4.500a3 3 0 0 1 6 0V7" fill="none" stroke="#b8b8b8" stroke-width="1.600"/><rect x="0.500" y="6.500" width="10" height="8" rx="1" fill="#b8b8b8"/></svg>
<div class="b" style="left:1221px;top:607px;width:362px;height:345px;background:#252525;"></div>
<div class="b" style="left:1583px;top:607px;width:17px;height:345px;background:#383838;"></div>
<div class="b" style="left:1221px;top:607.5px;width:362px;height:33.5px;background:#3b4552;"></div>
<div class="b" style="left:1221px;top:641px;width:362px;height:1.5px;background:#3c86d2;"></div>
<div class="b" style="left:1221px;top:642px;width:362px;height:37px;background:#2b2b2b;"></div>
<div class="b" style="left:1221px;top:679px;width:362px;height:37px;background:#2b2b2b;"></div>
<div class="b" style="left:1221px;top:716px;width:362px;height:36.5px;background:#2b2b2b;"></div>
<div class="b" style="left:1221px;top:752.5px;width:362px;height:36.5px;background:#2b2b2b;"></div>
<div class="b" style="left:1221px;top:789px;width:362px;height:36.5px;background:#2b2b2b;"></div>
<div class="b" style="left:1221px;top:825.5px;width:362px;height:37.0px;background:#2b2b2b;"></div>
<div class="b" style="left:1221px;top:678.5px;width:362px;height:1.2px;background:#101010;"></div>
<div class="b" style="left:1221px;top:715.5px;width:362px;height:1.2px;background:#101010;"></div>
<div class="b" style="left:1221px;top:751.5px;width:362px;height:1.2px;background:#101010;"></div>
<div class="b" style="left:1221px;top:788.5px;width:362px;height:1.2px;background:#101010;"></div>
<div class="b" style="left:1221px;top:825.5px;width:362px;height:1.2px;background:#101010;"></div>
<div class="b" style="left:1221px;top:861.5px;width:362px;height:1.2px;background:#101010;"></div>
<svg class="b" style="left:1223.5px;top:615px;" width="18" height="18" viewBox="0 0 18 18"><circle cx="9" cy="9" r="7.800" fill="#2a2f36" stroke="#b8b8b8" stroke-width="1"/><path d="M4.300 6h9.400L9 13.200z" fill="#b8b8b8"/></svg>
<svg class="b" style="left:1244.5px;top:609px;" width="31" height="31" viewBox="0 0 31 31"><rect width="31" height="31" fill="#2a2a2a" stroke="#111" stroke-width="1"/><g transform="translate(2.500,2) scale(0.0455)"><g transform="translate(-515,-292)"><rect x="546" y="440" width="300" height="104" rx="17" fill="#9dcac0" stroke="#777" stroke-width="16"/><rect x="604" y="587" width="298" height="104" rx="17" fill="#ccc" stroke="#777" stroke-width="16"/><rect x="655" y="732" width="300" height="104" rx="17" fill="#cfa27e" stroke="#777" stroke-width="16"/><circle cx="979" cy="417" r="72" fill="none" stroke="#fff" stroke-width="60"/><path d="M696 491L805 784" stroke="#fff" stroke-width="40" stroke-linecap="round"/><path d="M959 484C996 520 1000 585 964 636L1000 673 837 714 867 552 918 591C940 560 955 520 959 484Z" fill="#ff4d84" stroke="#777" stroke-width="14"/></g></g></svg>
<div id="l_layer1" class="t" style="left:1281px;top:616.20px;height:17px;line-height:17px;font-size:12px;color:#fff;font-weight:400;letter-spacing:-0.043px;-webkit-text-stroke:0.25px currentColor;"><span style="color:#fff;-webkit-text-stroke:0.600px #fff">Layer1</span> <span style="color:#b4b4b4">(Layer)</span></div>
<div class="b" style="left:1561px;top:617px;width:14px;height:14px;background:#262626;border-radius:2.500px;border:1px solid #484848;"></div><svg class="b" style="left:1563px;top:619px;" width="10" height="10" viewBox="0 0 10 10"><path d="M1.500 5.200l2.500 2.800 4.500-6.500" fill="none" stroke="#f2f2f2" stroke-width="1.500" stroke-linecap="round" stroke-linejoin="round"/></svg>
<svg class="b" style="left:1255.5px;top:644.5px;" width="31" height="31" viewBox="0 0 31 31"><rect x="0.500" y="0.500" width="30" height="30" fill="#2e2e2e" stroke="#0e0e0e" stroke-width="1"/><path d="M21.500 3.500C25 9 24.500 15.500 21 20.500L25.500 24.500 5 29 8 10.500 14 15.500C17.500 12 20.500 8 21.500 3.500Z" fill="#ff4d84" stroke="#707070" stroke-width="1.500" stroke-linejoin="round"/></svg>
<div id="l_row0" class="t" style="left:1292.3px;top:652.40px;height:17px;line-height:17px;font-size:12px;color:#b4b4b4;font-weight:400;letter-spacing:-0.086px;-webkit-text-stroke:0.25px currentColor;">(Curve)</div>
<div class="b" style="left:1561px;top:653.2px;width:14px;height:14px;background:#262626;border-radius:2.500px;border:1px solid #484848;"></div><svg class="b" style="left:1563px;top:655.2px;" width="10" height="10" viewBox="0 0 10 10"><path d="M1.500 5.200l2.500 2.800 4.500-6.500" fill="none" stroke="#f2f2f2" stroke-width="1.500" stroke-linecap="round" stroke-linejoin="round"/></svg>
<svg class="b" style="left:1255.5px;top:681.5px;" width="31" height="31" viewBox="0 0 31 31"><rect x="0.500" y="0.500" width="30" height="30" fill="#2e2e2e" stroke="#0e0e0e" stroke-width="1"/><circle cx="15.500" cy="15.500" r="9.500" fill="none" stroke="#8a8a8a" stroke-width="9.500" opacity=".5"/><circle cx="15.500" cy="15.500" r="9.300" fill="none" stroke="#fff" stroke-width="6.500"/><circle cx="15.500" cy="15.500" r="4.500" fill="#3a3a3a" stroke="#777" stroke-width="1.500"/></svg>
<div id="l_row1" class="t" style="left:1292.3px;top:689.40px;height:17px;line-height:17px;font-size:12px;color:#b4b4b4;font-weight:400;letter-spacing:0.081px;-webkit-text-stroke:0.25px currentColor;">(Donut)</div>
<div class="b" style="left:1561px;top:690.2px;width:14px;height:14px;background:#262626;border-radius:2.500px;border:1px solid #484848;"></div><svg class="b" style="left:1563px;top:692.2px;" width="10" height="10" viewBox="0 0 10 10"><path d="M1.500 5.200l2.500 2.800 4.500-6.500" fill="none" stroke="#f2f2f2" stroke-width="1.500" stroke-linecap="round" stroke-linejoin="round"/></svg>
<svg class="b" style="left:1255.5px;top:718.5px;" width="31" height="31" viewBox="0 0 31 31"><rect x="0.500" y="0.500" width="30" height="30" fill="#2e2e2e" stroke="#0e0e0e" stroke-width="1"/><path d="M11.500 3.500L20 27.500" stroke="#fff" stroke-width="2.200" stroke-linecap="round"/><circle cx="11.500" cy="3.500" r="2" fill="#fff"/><circle cx="15.700" cy="15.500" r="2" fill="#fff"/><circle cx="20" cy="27.500" r="2" fill="#fff"/></svg>
<div id="l_row2" class="t" style="left:1292.3px;top:726.40px;height:17px;line-height:17px;font-size:12px;color:#b4b4b4;font-weight:400;letter-spacing:-0.086px;-webkit-text-stroke:0.25px currentColor;">(Curve)</div>
<div class="b" style="left:1561px;top:727.2px;width:14px;height:14px;background:#262626;border-radius:2.500px;border:1px solid #484848;"></div><svg class="b" style="left:1563px;top:729.2px;" width="10" height="10" viewBox="0 0 10 10"><path d="M1.500 5.200l2.500 2.800 4.500-6.500" fill="none" stroke="#f2f2f2" stroke-width="1.500" stroke-linecap="round" stroke-linejoin="round"/></svg>
<svg class="b" style="left:1255.5px;top:755.0px;" width="31" height="31" viewBox="0 0 31 31"><rect x="0.500" y="0.500" width="30" height="30" fill="#2e2e2e" stroke="#0e0e0e" stroke-width="1"/><rect x="2.500" y="10" width="26" height="10.500" rx="3" fill="#cfa27e" stroke="#8a8a8a" stroke-width="1.600"/></svg>
<div id="l_row3" class="t" style="left:1292.3px;top:762.90px;height:17px;line-height:17px;font-size:12px;color:#b4b4b4;font-weight:400;letter-spacing:-0.088px;-webkit-text-stroke:0.25px currentColor;">(Rounded Rectangle)</div>
<div class="b" style="left:1561px;top:763.7px;width:14px;height:14px;background:#262626;border-radius:2.500px;border:1px solid #484848;"></div><svg class="b" style="left:1563px;top:765.7px;" width="10" height="10" viewBox="0 0 10 10"><path d="M1.500 5.200l2.500 2.800 4.500-6.500" fill="none" stroke="#f2f2f2" stroke-width="1.500" stroke-linecap="round" stroke-linejoin="round"/></svg>
<div id="t116" class="t" style="left:1539.5px;top:759.50px;height:22px;line-height:22px;font-size:16px;color:#ececec;font-weight:700;font-family:'Liberation Serif',serif;"><i>f</i><i style="font-size:15.2px;margin-left:-0.500px">x</i></div>
<svg class="b" style="left:1255.5px;top:791.5px;" width="31" height="31" viewBox="0 0 31 31"><rect x="0.500" y="0.500" width="30" height="30" fill="#2e2e2e" stroke="#0e0e0e" stroke-width="1"/><rect x="2.500" y="10" width="26" height="10.500" rx="3" fill="#cfcfcf" stroke="#8a8a8a" stroke-width="1.600"/></svg>
<div id="l_row4" class="t" style="left:1292.3px;top:799.40px;height:17px;line-height:17px;font-size:12px;color:#b4b4b4;font-weight:400;letter-spacing:-0.088px;-webkit-text-stroke:0.25px currentColor;">(Rounded Rectangle)</div>
<div class="b" style="left:1561px;top:800.2px;width:14px;height:14px;background:#262626;border-radius:2.500px;border:1px solid #484848;"></div><svg class="b" style="left:1563px;top:802.2px;" width="10" height="10" viewBox="0 0 10 10"><path d="M1.500 5.200l2.500 2.800 4.500-6.500" fill="none" stroke="#f2f2f2" stroke-width="1.500" stroke-linecap="round" stroke-linejoin="round"/></svg>
<div id="t118" class="t" style="left:1539.5px;top:796.00px;height:22px;line-height:22px;font-size:16px;color:#ececec;font-weight:700;font-family:'Liberation Serif',serif;"><i>f</i><i style="font-size:15.2px;margin-left:-0.500px">x</i></div>
<svg class="b" style="left:1255.5px;top:828.0px;" width="31" height="31" viewBox="0 0 31 31"><rect x="0.500" y="0.500" width="30" height="30" fill="#2e2e2e" stroke="#0e0e0e" stroke-width="1"/><rect x="2.500" y="10" width="26" height="10.500" rx="3" fill="#9dcac0" stroke="#8a8a8a" stroke-width="1.600"/></svg>
<div id="l_row5" class="t" style="left:1292.3px;top:835.90px;height:17px;line-height:17px;font-size:12px;color:#b4b4b4;font-weight:400;letter-spacing:-0.088px;-webkit-text-stroke:0.25px currentColor;">(Rounded Rectangle)</div>
<div class="b" style="left:1561px;top:836.7px;width:14px;height:14px;background:#262626;border-radius:2.500px;border:1px solid #484848;"></div><svg class="b" style="left:1563px;top:838.7px;" width="10" height="10" viewBox="0 0 10 10"><path d="M1.500 5.200l2.500 2.800 4.500-6.500" fill="none" stroke="#f2f2f2" stroke-width="1.500" stroke-linecap="round" stroke-linejoin="round"/></svg>
<div id="t120" class="t" style="left:1539.5px;top:832.50px;height:22px;line-height:22px;font-size:16px;color:#ececec;font-weight:700;font-family:'Liberation Serif',serif;"><i>f</i><i style="font-size:15.2px;margin-left:-0.500px">x</i></div>
<div class="b" style="left:1221px;top:952px;width:379px;height:26px;background:#3b3b3b;border-top:1px solid #2a2a2a;"></div>
<div class="b" style="left:1226px;top:954.5px;width:23px;height:22px;background:#303030;"></div>
<svg class="b" style="left:1228.5px;top:956.5px;" width="18" height="18" viewBox="0 0 18 18"><g fill="none" stroke="#d8d8d8" stroke-width="1.300" stroke-linejoin="round"><path d="M9 9.500l7.500 3.200L9 16 1.500 12.700z" fill="#8a8a8a"/><path d="M9 6l7.500 3.200L9 12.500 1.500 9.200z" fill="#303030"/><path d="M9 2.500l7.500 3.200L9 9 1.500 5.700z" fill="#8a8a8a"/></g></svg>
<svg class="b" style="left:1398.5px;top:958.5px;" width="16" height="14" viewBox="0 0 16 14"><rect width="16" height="14" fill="#d0d0d0"/><circle cx="8" cy="7" r="4" fill="#3a3a3a"/></svg>
<svg class="b" style="left:1425px;top:958.5px;" width="14" height="14" viewBox="0 0 14 14"><circle cx="7" cy="7" r="6.300" fill="#e8e8e8"/><path d="M11.500 2.500A6.300 6.300 0 0 1 2.500 11.500z" fill="#3a3a3a"/><circle cx="7" cy="7" r="6.300" fill="none" stroke="#e8e8e8" stroke-width="0.900"/></svg>
<div id="t121" class="t" style="left:1448px;top:953.80px;height:22px;line-height:22px;font-size:16px;color:#e8e8e8;font-weight:700;font-family:'Liberation Serif',serif;"><i>f</i><i style="font-size:15.2px;margin-left:-0.500px">x</i></div>
<svg class="b" style="left:1527.5px;top:958px;" width="13" height="15" viewBox="0 0 13 15"><path d="M0.500 0.500h7.500l4.500 4.500v9.500h-12z" fill="#cfcfcf"/><path d="M8 0.500v4.500h4.500z" fill="#8a8a8a"/></svg>
<svg class="b" style="left:1550.5px;top:957.5px;" width="16" height="16" viewBox="0 0 16 16"><path d="M4 1.500h6.500l4.500 4.500v9.500H4z" fill="#cfcfcf"/><path d="M10.500 1.500v4.500h4.500z" fill="#8a8a8a"/><g fill="#555"><rect x="5.500" y="6" width="2" height="2"/><rect x="9.500" y="6" width="2" height="2"/><rect x="7.500" y="8" width="2" height="2"/><rect x="11.500" y="8" width="2" height="2"/><rect x="5.500" y="10" width="2" height="2"/><rect x="9.500" y="10" width="2" height="2"/><rect x="7.500" y="12" width="2" height="2"/><rect x="11.500" y="12" width="2" height="2"/></g><path d="M1 0v5" stroke="#cfcfcf" stroke-width="1" stroke-dasharray="1 1"/></svg>
<svg class="b" style="left:1579px;top:958px;" width="11" height="15" viewBox="0 0 11 15"><rect x="0" y="2" width="11" height="1.600" fill="#cfcfcf"/><rect x="3.500" y="0.300" width="4" height="2" fill="#cfcfcf"/><path d="M1 4.500h9l-0.800 10.500h-7.400z" fill="#bcbcbc"/><path d="M3.500 6v7.500M5.500 6v7.500M7.500 6v7.500" stroke="#555" stroke-width="0.800"/></svg>
<div class="b" style="left:0px;top:978px;width:1600px;height:22px;background:#2b2b2b;border-radius:0 0 7px 7px;"></div>
<div id="status" class="t" style="left:22.3px;top:981.70px;height:17px;line-height:17px;font-size:12px;color:#cfcfcf;font-weight:400;letter-spacing:0.145px;-webkit-text-stroke:0.25px currentColor;"><span style="color:#f4f4f4;-webkit-text-stroke:0.600px #f4f4f4">Drag</span> to marquee select. <span style="color:#f4f4f4;-webkit-text-stroke:0.600px #f4f4f4">Click</span> an object to select it.</div>
</div>
</body></html>
